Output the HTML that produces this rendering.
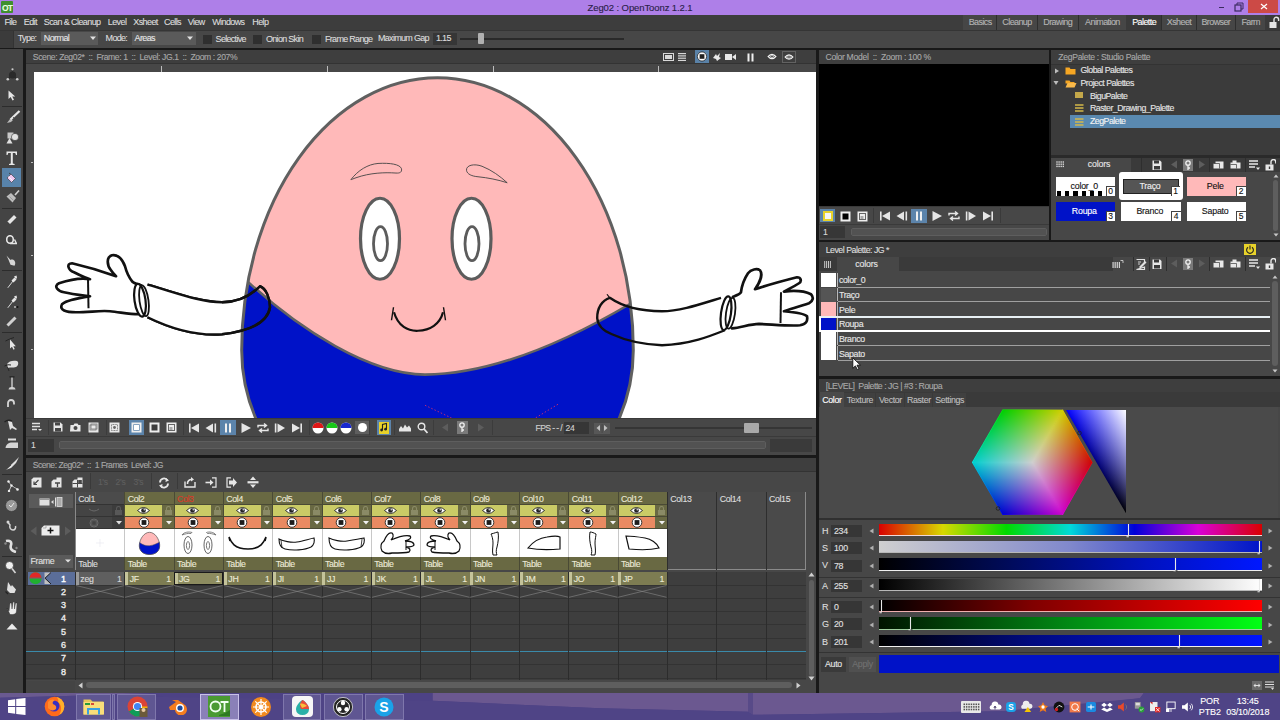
<!DOCTYPE html><html><head><meta charset="utf-8"><style>
html,body{margin:0;padding:0;}
body{width:1280px;height:720px;overflow:hidden;position:relative;background:#191919;font-family:"Liberation Sans", sans-serif;}
div,span{position:absolute;box-sizing:border-box;}
span{white-space:nowrap;-webkit-text-stroke:0.12px;}
</style></head><body>

<div style="left:0px;top:0px;width:1280px;height:15px;background:#ae7fe8;"></div>
<div style="left:1px;top:1px;width:12px;height:12px;background:#3f8f2f;border-radius:1px;"></div>
<span style="left:2.00px;top:3.80px;font-size:8.5px;line-height:8.5px;color:#e8ffe0;letter-spacing:-0.8px;font-weight:bold;">OT</span>
<span style="left:490.00px;top:3.26px;width:300px;text-align:center;font-size:9.5px;line-height:9.5px;color:#2a2048;letter-spacing:-0.1px;">Zeg02 : OpenToonz 1.2.1</span>
<div style="left:1218.75px;top:7.2px;width:5.5px;height:1.3px;background:#3a2a60;"></div>
<svg style="position:absolute;left:1234px;top:2px;" width="10" height="10" viewBox="0 0 10 10"><rect x="1" y="3" width="6" height="6" fill="none" stroke="#3a2a60" stroke-width="1.2"/><path d="M3 3V1h6v6H7" fill="none" stroke="#3a2a60" stroke-width="1"/></svg>
<div style="left:1248px;top:0px;width:30px;height:12.5px;background:#cc4a46;"></div>
<svg style="position:absolute;left:1259.5px;top:3px;" width="8" height="7" viewBox="0 0 8 7"><path d="M1 1L7 6M7 1L1 6" stroke="#fff" stroke-width="1.2"/></svg>
<div style="left:0px;top:15px;width:1280px;height:14.5px;background:#3d3d3d;"></div>
<span style="left:4.40px;top:18.28px;font-size:9px;line-height:9px;color:#dcdcdc;letter-spacing:-0.6px;">File</span>
<span style="left:23.80px;top:18.28px;font-size:9px;line-height:9px;color:#dcdcdc;letter-spacing:-0.6px;">Edit</span>
<span style="left:43.80px;top:18.28px;font-size:9px;line-height:9px;color:#dcdcdc;letter-spacing:-0.6px;">Scan &amp; Cleanup</span>
<span style="left:107.80px;top:18.28px;font-size:9px;line-height:9px;color:#dcdcdc;letter-spacing:-0.6px;">Level</span>
<span style="left:133.30px;top:18.28px;font-size:9px;line-height:9px;color:#dcdcdc;letter-spacing:-0.6px;">Xsheet</span>
<span style="left:164.00px;top:18.28px;font-size:9px;line-height:9px;color:#dcdcdc;letter-spacing:-0.6px;">Cells</span>
<span style="left:187.80px;top:18.28px;font-size:9px;line-height:9px;color:#dcdcdc;letter-spacing:-0.6px;">View</span>
<span style="left:212.20px;top:18.28px;font-size:9px;line-height:9px;color:#dcdcdc;letter-spacing:-0.6px;">Windows</span>
<span style="left:252.30px;top:18.28px;font-size:9px;line-height:9px;color:#dcdcdc;letter-spacing:-0.6px;">Help</span>
<div style="left:963px;top:15px;width:317px;height:14.5px;background:#464646;"></div>
<div style="left:996.4px;top:15px;width:1px;height:14.5px;background:#2e2e2e;"></div>
<span style="left:880.20px;top:18.28px;width:200px;text-align:center;font-size:9px;line-height:9px;color:#b4b4b4;letter-spacing:-0.6px;">Basics</span>
<div style="left:1036.6px;top:15px;width:1px;height:14.5px;background:#2e2e2e;"></div>
<span style="left:917.00px;top:18.28px;width:200px;text-align:center;font-size:9px;line-height:9px;color:#b4b4b4;letter-spacing:-0.6px;">Cleanup</span>
<div style="left:1077.8px;top:15px;width:1px;height:14.5px;background:#2e2e2e;"></div>
<span style="left:957.70px;top:18.28px;width:200px;text-align:center;font-size:9px;line-height:9px;color:#b4b4b4;letter-spacing:-0.6px;">Drawing</span>
<div style="left:1126px;top:15px;width:1px;height:14.5px;background:#2e2e2e;"></div>
<span style="left:1002.40px;top:18.28px;width:200px;text-align:center;font-size:9px;line-height:9px;color:#b4b4b4;letter-spacing:-0.6px;">Animation</span>
<div style="left:1126px;top:15px;width:35.299999999999955px;height:14.5px;background:#3a3a3a;"></div>
<div style="left:1161.3px;top:15px;width:1px;height:14.5px;background:#2e2e2e;"></div>
<span style="left:1044.15px;top:18.28px;width:200px;text-align:center;font-size:9px;line-height:9px;color:#ffffff;letter-spacing:-0.6px;">Palette</span>
<div style="left:1195.7px;top:15px;width:1px;height:14.5px;background:#2e2e2e;"></div>
<span style="left:1079.00px;top:18.28px;width:200px;text-align:center;font-size:9px;line-height:9px;color:#b4b4b4;letter-spacing:-0.6px;">Xsheet</span>
<div style="left:1235px;top:15px;width:1px;height:14.5px;background:#2e2e2e;"></div>
<span style="left:1115.85px;top:18.28px;width:200px;text-align:center;font-size:9px;line-height:9px;color:#b4b4b4;letter-spacing:-0.6px;">Browser</span>
<div style="left:1265.4px;top:15px;width:1px;height:14.5px;background:#2e2e2e;"></div>
<span style="left:1150.70px;top:18.28px;width:200px;text-align:center;font-size:9px;line-height:9px;color:#b4b4b4;letter-spacing:-0.6px;">Farm</span>
<div style="left:1265.4px;top:15px;width:14.6px;height:14.5px;background:#3a3a3a;"></div>
<svg style="position:absolute;left:1268px;top:16px;" width="12" height="13" viewBox="0 0 12 13"><rect x="1.5" y="6" width="7" height="6" fill="#e6e6e6"/><path d="M6 6V3.5a2.3 2.3 0 0 1 4.6 0V5" fill="none" stroke="#e6e6e6" stroke-width="1.4"/></svg>
<div style="left:0px;top:29.5px;width:1280px;height:18px;background:#474747;"></div>
<div style="left:0px;top:29.5px;width:12.5px;height:18px;background:#3b3b3b;"></div>
<div style="left:12.5px;top:29.5px;width:1.2px;height:18px;background:#333;"></div>
<div style="left:0px;top:29.5px;width:1280px;height:1px;background:#353535;"></div>
<span style="left:17.80px;top:34.38px;font-size:9px;line-height:9px;color:#dcdcdc;letter-spacing:-0.7px;">Type:</span>
<div style="left:41px;top:32px;width:57px;height:12.7px;background:#5a5a5a;"></div>
<span style="left:43.80px;top:34.38px;font-size:9px;line-height:9px;color:#e6e6e6;letter-spacing:-0.6px;">Normal</span>
<svg style="position:absolute;left:89px;top:35px;" width="8" height="6" viewBox="0 0 8 6"><path d="M1 1.5h6L4 5z" fill="#e0e0e0"/></svg>
<span style="left:105.60px;top:34.38px;font-size:9px;line-height:9px;color:#dcdcdc;letter-spacing:-0.7px;">Mode:</span>
<div style="left:132px;top:32px;width:63.5px;height:12.7px;background:#5a5a5a;"></div>
<span style="left:134.50px;top:34.38px;font-size:9px;line-height:9px;color:#e6e6e6;letter-spacing:-0.6px;">Areas</span>
<svg style="position:absolute;left:186px;top:35px;" width="8" height="6" viewBox="0 0 8 6"><path d="M1 1.5h6L4 5z" fill="#e0e0e0"/></svg>
<div style="left:203px;top:35px;width:8.5px;height:8.5px;background:#2f2f2f;"></div>
<span style="left:215.60px;top:34.88px;font-size:9px;line-height:9px;color:#dcdcdc;letter-spacing:-0.7px;">Selective</span>
<div style="left:253px;top:35px;width:8.5px;height:8.5px;background:#2f2f2f;"></div>
<span style="left:266.00px;top:34.88px;font-size:9px;line-height:9px;color:#dcdcdc;letter-spacing:-0.7px;">Onion Skin</span>
<div style="left:312px;top:35px;width:8.5px;height:8.5px;background:#2f2f2f;"></div>
<span style="left:325.00px;top:34.88px;font-size:9px;line-height:9px;color:#dcdcdc;letter-spacing:-0.7px;">Frame Range</span>
<span style="left:378.00px;top:34.38px;font-size:9px;line-height:9px;color:#dcdcdc;letter-spacing:-0.7px;">Maximum Gap</span>
<div style="left:433.3px;top:32.6px;width:23.5px;height:12.2px;background:#363636;"></div>
<span style="left:436.00px;top:34.38px;font-size:9px;line-height:9px;color:#dcdcdc;letter-spacing:-0.7px;">1.15</span>
<div style="left:460px;top:37.8px;width:163.5px;height:1.8px;background:#2a2a2a;"></div>
<div style="left:478.4px;top:33.3px;width:5.2px;height:10.7px;background:#b0b0b0;border-radius:1px;"></div>
<div style="left:0px;top:48.5px;width:23.3px;height:642px;background:#414141;"></div>
<div style="left:0px;top:48.5px;width:23.3px;height:644.2px;background:#444444;"></div>
<div style="left:1.5px;top:105.8px;width:20px;height:1px;background:#2c2c2c;"></div>
<div style="left:1.5px;top:207.8px;width:20px;height:1px;background:#2c2c2c;"></div>
<div style="left:1.5px;top:270.0px;width:20px;height:1px;background:#2c2c2c;"></div>
<div style="left:1.5px;top:331.9px;width:20px;height:1px;background:#2c2c2c;"></div>
<div style="left:1.5px;top:473.8px;width:20px;height:1px;background:#2c2c2c;"></div>
<div style="left:1.5px;top:556.1px;width:20px;height:1px;background:#2c2c2c;"></div>
<div style="left:1.9px;top:167.8px;width:19px;height:19px;background:#5883aa;"></div>
<svg style="position:absolute;left:5.8px;top:68.4px;" width="13" height="13" viewBox="0 0 13 13"><circle cx="6.5" cy="7" r="3.6" fill="#2a2a2a"/><path d="M6.5 1v6M6.5 7L2 11M6.5 7L11 11" stroke="#2a2a2a" stroke-width="1.2"/><circle cx="6.5" cy="1.3" r="1.1" fill="#ccc"/><circle cx="1.8" cy="11.2" r="1.3" fill="#ccc"/><circle cx="11.2" cy="11.2" r="1.3" fill="#ccc"/></svg>
<svg style="position:absolute;left:8.3px;top:90.3px;" width="8" height="11" viewBox="0 0 8 11"><path d="M0.5 0.5v8.5l2.2-2 1.8 3.5 1.5-.8-1.8-3.3h3z" fill="#e6e6e6"/></svg>
<svg style="position:absolute;left:5.8px;top:109.7px;" width="15" height="14" viewBox="0 0 15 14"><path d="M1 13l3-4 3 1-2 2z" fill="#bbb"/><path d="M4.5 9.5L13.5 1" stroke="#e6e6e6" stroke-width="2.2"/><path d="M7 7l2 2" stroke="#444" stroke-width="0.8"/></svg>
<svg style="position:absolute;left:5.8px;top:131.8px;" width="13" height="12" viewBox="0 0 13 12"><rect x="1.5" y="0.5" width="6" height="6" fill="#c8c8c8"/><circle cx="9" cy="5" r="3.6" fill="#e0e0e0" stroke="#333" stroke-width="0.6"/><path d="M0.5 11.5L3.5 6l3 5.5z" fill="#e0e0e0"/></svg>
<svg style="position:absolute;left:6.3px;top:150.8px;" width="11.5" height="14" viewBox="0 0 11.5 14"><path d="M0.5 0.5h10.5v3.5h-1l-.8-2H6.8v10.5l1.8.6v.9H3v-.9l1.8-.6V2H2.3l-.8 2h-1z" fill="#e8e8e8"/></svg>
<svg style="position:absolute;left:6.3px;top:171.5px;" width="10" height="11" viewBox="0 0 10 11"><path d="M3 1l2 1.5" stroke="#333" stroke-width="0.8"/><path d="M1 6l4-4 4.5 4.5-4 4z" fill="#f0c8f0" stroke="#333" stroke-width="0.6"/><path d="M2.5 4.5l4.5 4.5" stroke="#fff" stroke-width="0.8"/></svg>
<svg style="position:absolute;left:6.3px;top:189.9px;" width="14" height="13.5" viewBox="0 0 14 13.5"><path d="M9 5L13 0.5" stroke="#d0d0d0" stroke-width="1.6"/><path d="M0.5 6.5L5 3l5 5-3.5 4.5z" fill="#bdbdbd"/><path d="M2 8l4 4M3.5 6.5l4 4" stroke="#777" stroke-width="0.5"/></svg>
<svg style="position:absolute;left:6.8px;top:214.2px;" width="10" height="10.5" viewBox="0 0 10 10.5"><path d="M0.5 7.5L7 1l2.5 2.5L3 10z" fill="#e6e6e6"/><path d="M0.5 7.5L3 10" stroke="#999" stroke-width="0.8"/></svg>
<svg style="position:absolute;left:5.8px;top:234.6px;" width="11.5" height="10" viewBox="0 0 11.5 10"><ellipse cx="4" cy="4.5" rx="3.3" ry="3.8" fill="none" stroke="#e6e6e6" stroke-width="1.6"/><path d="M4 8.5h6.5l-2-4" fill="none" stroke="#e6e6e6" stroke-width="1.4"/></svg>
<svg style="position:absolute;left:6.3px;top:254.7px;" width="10" height="11.5" viewBox="0 0 10 11.5"><path d="M0.5 0.5l4 4.5c1-.8 3-.5 4 .8 1 1.5 1 3.5 0 5l-4-1-2-5z" fill="#d6d6d6"/></svg>
<svg style="position:absolute;left:6.8px;top:275.2px;" width="10" height="13.5" viewBox="0 0 10 13.5"><path d="M0.8 12.8L6 6" stroke="#d6d6d6" stroke-width="1"/><path d="M4.5 5.5l3-3 2 2-3 3z" fill="#e6e6e6"/><path d="M7 1.5l2.5-1 .5 2.5-1 1z" fill="#e6e6e6"/></svg>
<svg style="position:absolute;left:6.8px;top:295px;" width="12" height="14" viewBox="0 0 12 14"><path d="M0.8 12.8L6 6" stroke="#d6d6d6" stroke-width="1"/><path d="M4.5 5.5l3-3 2 2-3 3z" fill="#e6e6e6"/><path d="M7 1.5l2.5-1 .5 2.5-1 1z" fill="#e6e6e6"/><circle cx="8" cy="12" r="1" fill="#bbb"/><circle cx="10.5" cy="12" r="1" fill="#111"/></svg>
<svg style="position:absolute;left:6.3px;top:316.2px;" width="11" height="11" viewBox="0 0 11 11"><path d="M1.5 9.5L9.5 1.5" stroke="#d0d0d0" stroke-width="3"/></svg>
<svg style="position:absolute;left:4.9px;top:336.6px;" width="12.5" height="14" viewBox="0 0 12.5 14"><path d="M0.5 4Q4 2 9 0.5" fill="none" stroke="#222" stroke-width="0.9"/><path d="M5 2.5v9l2-1.8 1.5 3 1.2-.6-1.4-2.8h2.5z" fill="#e6e6e6"/></svg>
<svg style="position:absolute;left:4.4px;top:358.5px;" width="15" height="12.5" viewBox="0 0 15 12.5"><path d="M3 5C5 2 9 1 13 2c2 1 1.5 5-1 6-3 1-6 0-8 1z" fill="#e0e0e0"/><path d="M0.5 7Q4 5 7 6" fill="none" stroke="#222" stroke-width="1"/><path d="M3.5 8l1.5 4" stroke="#222" stroke-width="0.8"/></svg>
<svg style="position:absolute;left:7.8px;top:375.8px;" width="8" height="14.5" viewBox="0 0 8 14.5"><path d="M1.5 0.8h5M4 0.8v11" stroke="#222" stroke-width="1.2"/><path d="M4 1.5v10" stroke="#d8d8d8" stroke-width="1.4"/><path d="M0.5 13.5C1 11 3 11 4 11s3 0 3.5 2.5z" fill="#d0d0d0"/></svg>
<svg style="position:absolute;left:6.3px;top:398.2px;" width="10" height="11" viewBox="0 0 10 11"><path d="M2 9V5a3 3 0 0 1 6 0v1.5" fill="none" stroke="#d6d6d6" stroke-width="1.8"/></svg>
<svg style="position:absolute;left:3.9px;top:417.7px;" width="15.5" height="12.5" viewBox="0 0 15.5 12.5"><path d="M0.5 4Q4 1 8 3" fill="none" stroke="#222" stroke-width="1.2"/><path d="M4 3l4 1 1 4 4 3-1 1-4-2-2 2z" fill="#e0e0e0"/></svg>
<svg style="position:absolute;left:4.9px;top:437.8px;" width="13.5" height="11" viewBox="0 0 13.5 11"><rect x="3" y="0.5" width="8" height="2" fill="#e0e0e0"/><path d="M0.5 10C1 6 4 4.5 7 4.5h6v5.5z" fill="#d6d6d6"/></svg>
<svg style="position:absolute;left:5.4px;top:455.8px;" width="14.5" height="14.5" viewBox="0 0 14.5 14.5"><path d="M0.5 14L9 6l5-5-3 6-5 5z" fill="#e0e0e0"/><path d="M0.5 14L6 9" stroke="#222" stroke-width="0.7"/></svg>
<svg style="position:absolute;left:6.8px;top:479.6px;" width="12" height="12.5" viewBox="0 0 12 12.5"><path d="M1.5 1.5L4.5 5.5L11 9.5M4.5 5.5L2 11" stroke="#d6d6d6" stroke-width="0.9"/><circle cx="1.5" cy="1.5" r="1.2" fill="#eee"/><circle cx="4.5" cy="5.5" r="1.2" fill="#eee"/><circle cx="10.5" cy="9.5" r="1.3" fill="#eee"/><circle cx="2" cy="11" r="1.2" fill="#eee"/></svg>
<svg style="position:absolute;left:5.4px;top:499.2px;" width="13" height="13" viewBox="0 0 13 13"><circle cx="6.5" cy="6.5" r="6" fill="#9a9a9a" stroke="#333" stroke-width="0.6"/><path d="M4 6l2 2 3-4" fill="none" stroke="#e8e8e8" stroke-width="1"/></svg>
<svg style="position:absolute;left:6.3px;top:520.2px;" width="11" height="11" viewBox="0 0 11 11"><circle cx="2" cy="2" r="1.5" fill="#d6d6d6"/><path d="M2 2.5L4 5c-1 3 1 5 3 5s3-2 2.5-4" fill="none" stroke="#d6d6d6" stroke-width="1.5"/></svg>
<svg style="position:absolute;left:4.4px;top:538.6px;" width="14" height="14" viewBox="0 0 14 14"><path d="M2 2C6 1 8 3 7 6s0 6 5 7" fill="none" stroke="#e0e0e0" stroke-width="2.6"/><circle cx="1.5" cy="4.5" r="1.2" fill="#888"/><circle cx="12.5" cy="9" r="1.2" fill="#888"/></svg>
<svg style="position:absolute;left:5.4px;top:560.8px;" width="11.5" height="13" viewBox="0 0 11.5 13"><circle cx="4.5" cy="4.5" r="4" fill="#f0f0f0" stroke="#222" stroke-width="0.6"/><path d="M7 7.5l3.5 4.5" stroke="#d6d6d6" stroke-width="1.6"/></svg>
<svg style="position:absolute;left:5.4px;top:580.8px;" width="13" height="14" viewBox="0 0 13 14"><path d="M3 1l3 4.5 1-1.5 4 4.5-1.5 3.5H5L2 9z" fill="#e0e0e0"/><path d="M0.5 10.5L3 13" stroke="#222" stroke-width="1.3"/></svg>
<svg style="position:absolute;left:5.8px;top:602.2px;" width="11" height="12.5" viewBox="0 0 11 12.5"><path d="M1 6l2 3 1-8 1.5 0 .5 6 1-7 1.5 0v7l1-6h1.5l-.5 8c0 2-1.5 3.5-4 3.5H4z" fill="#ececec" stroke="#222" stroke-width="0.4"/></svg>
<svg style="position:absolute;left:6px;top:622px;" width="12" height="9" viewBox="0 0 12 9"><path d="M0.5 7.5L6 1.5l5.5 6z" fill="#ececec"/></svg>
<div style="left:26px;top:49.5px;width:790px;height:405.5px;background:#474747;"></div>
<div style="left:26px;top:49.5px;width:790px;height:14px;background:#3e3e3e;"></div>
<div style="left:26px;top:63.2px;width:790px;height:0.8px;background:#333333;"></div>
<span style="left:32.80px;top:52.72px;font-size:8.6px;line-height:8.6px;color:#a8a8a8;letter-spacing:-0.4px;">Scene: Zeg02*&nbsp;&nbsp;::&nbsp;&nbsp;Frame: 1&nbsp;&nbsp;::&nbsp;&nbsp;Level: JG.1&nbsp;&nbsp;::&nbsp;&nbsp;Zoom : 207%</span>
<svg style="position:absolute;left:663px;top:53px;" width="11" height="8" viewBox="0 0 11 8"><rect x="0.5" y="0.5" width="10" height="7" fill="none" stroke="#d8d8d8" stroke-width="1"/><rect x="2" y="2" width="7" height="4" fill="#d8d8d8"/></svg>
<svg style="position:absolute;left:678px;top:53px;" width="8" height="8" viewBox="0 0 8 8"><rect x="0" y="0" width="8" height="1.2" fill="#d8d8d8"/><rect x="0" y="2.3" width="8" height="1.2" fill="#d8d8d8"/><rect x="0" y="4.6" width="8" height="1.2" fill="#d8d8d8"/><rect x="0" y="6.9" width="8" height="1.2" fill="#d8d8d8"/></svg>
<div style="left:694.7px;top:50px;width:14px;height:13px;background:#5a82a8;"></div>
<svg style="position:absolute;left:696px;top:51px;" width="12" height="11" viewBox="0 0 12 11"><circle cx="6" cy="5.5" r="4.6" fill="#fff" stroke="#222" stroke-width="0.8"/><rect x="3.6" y="3.2" width="4.8" height="4.6" fill="#222"/></svg>
<svg style="position:absolute;left:712px;top:52px;" width="10" height="10" viewBox="0 0 10 10"><path d="M1 6l3-4 1 2 3-3-1 4 2 1-4 3-1-2z" fill="#e8e8e8"/></svg>
<svg style="position:absolute;left:725px;top:53px;" width="11" height="8" viewBox="0 0 11 8"><rect x="0" y="1" width="7" height="6" fill="#e8e8e8"/><path d="M7 4l4-3v6z" fill="#e8e8e8"/></svg>
<svg style="position:absolute;left:746.5px;top:52.5px;" width="7" height="9" viewBox="0 0 7 9"><rect x="0.5" y="0.5" width="2" height="8" fill="#f0f0f0"/><rect x="4.5" y="0.5" width="2" height="8" fill="#f0f0f0"/></svg>
<svg style="position:absolute;left:766.6px;top:52px;" width="10" height="9" viewBox="0 0 10 9"><path d="M0.3 4.5Q5 -1.2 9.7 4.5Q5 10.2 0.3 4.5z" fill="#f4f4f4"/><path d="M2 4.5Q5 1.3 8 4.5Q5 7.7 2 4.5z" fill="#3a3a3a"/><circle cx="5" cy="4.5" r="1.6" fill="#f4f4f4"/><circle cx="5" cy="4.5" r="0.9" fill="#3a3a3a"/></svg>
<svg style="position:absolute;left:782px;top:50.5px;" width="14" height="12" viewBox="0 0 14 12"><rect x="0.5" y="0.5" width="13" height="11" fill="none" stroke="#999" stroke-width="0.8" stroke-dasharray="1 1"/><g transform="translate(2,1.5)"><path d="M0.3 4.5Q5 -1.2 9.7 4.5Q5 10.2 0.3 4.5z" fill="#f4f4f4"/><path d="M2 4.5Q5 1.3 8 4.5Q5 7.7 2 4.5z" fill="#3a3a3a"/><circle cx="5" cy="4.5" r="1.6" fill="#f4f4f4"/><circle cx="5" cy="4.5" r="0.9" fill="#3a3a3a"/></g></svg>
<div style="left:161px;top:66px;width:0.8px;height:5.5px;background:#bdbdbd;"></div>
<div style="left:327px;top:66px;width:0.8px;height:5.5px;background:#bdbdbd;"></div>
<div style="left:492.8px;top:66px;width:0.8px;height:5.5px;background:#bdbdbd;"></div>
<div style="left:657.7px;top:66px;width:0.8px;height:5.5px;background:#bdbdbd;"></div>
<div style="left:31px;top:162px;width:2px;height:0.8px;background:#bdbdbd;"></div>
<div style="left:31px;top:255px;width:2px;height:0.8px;background:#bdbdbd;"></div>
<div style="left:31px;top:348.5px;width:2px;height:0.8px;background:#bdbdbd;"></div>
<div style="left:34px;top:71.75px;width:781.5px;height:346.5px;background:#ffffff;"></div>
<svg style="position:absolute;left:34px;top:71.75px;" width="781.5" height="346.5" viewBox="0 0 781.5 346.5"><g transform="translate(-34,-71.75)">
<defs><clipPath id="eggclip"><path d="M241.7 350 A195.8 272.5 0 0 1 633.3 350 A195.8 183 0 0 1 241.7 350z"/></clipPath></defs>
<path d="M241.7 350 A195.8 272.5 0 0 1 633.3 350 A195.8 183 0 0 1 241.7 350z" fill="#ffb9b9"/>
<g clip-path="url(#eggclip)"><path d="M230 266 L246.9 280.6 C300 330 370 374 425 374.4 C490 374 560 345 631.2 303 L650 292 L650 560 L230 560z" fill="#0012c8"/>
<path d="M246.9 280.6 C300 330 370 374 425 374.4 C490 374 560 345 631.2 303" fill="none" stroke="#626262" stroke-width="2.6"/></g>
<path d="M241.7 350 A195.8 272.5 0 0 1 633.3 350 A195.8 183 0 0 1 241.7 350z" fill="none" stroke="#606060" stroke-width="3"/>
<path d="M350.9 179.4 C358 170 368 164 378 163.2 C390 162.5 400 164 401.5 168.5 C402 172 400 173 396 172.8 C385 172 370 172.5 356 177.5 C353 178.5 351.5 179.5 350.9 179.4z" fill="none" stroke="#444" stroke-width="0.9"/>
<path d="M507.2 182.5 C500 176 492 170 482 166 C474 163 466 165 466.5 170 C467 174 472 176 478 176.5 C488 177.5 498 179.5 507.2 182.5z" fill="none" stroke="#444" stroke-width="0.9"/>
<ellipse cx="380" cy="238.5" rx="19.5" ry="40.5" fill="#fff" stroke="#5c5c5c" stroke-width="3.2"/>
<ellipse cx="380.5" cy="243.4" rx="7" ry="17" fill="#fff" stroke="#5c5c5c" stroke-width="2.8"/>
<ellipse cx="471.5" cy="238.5" rx="19.5" ry="40.5" fill="#fff" stroke="#5c5c5c" stroke-width="3.2"/>
<ellipse cx="472" cy="243.4" rx="7" ry="17" fill="#fff" stroke="#5c5c5c" stroke-width="2.8"/>
<path d="M394 312 C398 326 408 331 418 330.5 C430 330 440 324 443 312" fill="none" stroke="#111" stroke-width="2.2"/>
<path d="M393.5 307 L391.5 320 M443.5 307 L445.5 320" stroke="#111" stroke-width="1.4"/>

<path d="M147.5 284.4 C175 292 200 302 222 302 C240 302 252 294 260 286 C266 288 270 298 270 307 C268 320 256 330 222 334 C195 336 170 328 147.5 317" fill="none" stroke="#111" stroke-width="2.4" stroke-linejoin="round"/>
<path d="M147.5 284.4 C175 292 200 302 222 302 L222 334 C195 336 170 328 147.5 317z" fill="#fff"/>
<path d="M147.5 284.4 C175 292 200 302 222 302 C240 302 252 294 260 286 C266 288 270 298 270 307 C268 320 256 330 222 334 C195 336 170 328 147.5 317" fill="none" stroke="#111" stroke-width="2.4" stroke-linejoin="round"/>
<path d="M141 285 C137 284 134 283 132.5 281.6 C128 276 126 270 125 266 C122 258 117 254 112 255 C106 257 107 265 111 270 C113 273 115 275 116 276 C105 272 85 266 72 263 C66 263 68 270 74 272 C80 275 86 278 90 279 C80 277 65 281 59 283 C53 286 58 291 64 292 C72 294 82 295 90 296 C78 298 66 300 62 304 C59 310 66 312 76 312 C90 312 100 310 110 311 C120 312 130 314 138 314" fill="#fff" stroke="#111" stroke-width="2.7" stroke-linejoin="round" stroke-linecap="round"/>
<path d="M88 278 L88.5 308" stroke="#111" stroke-width="2"/>
<ellipse cx="140" cy="300" rx="5.5" ry="16.5" fill="#fff" stroke="#111" stroke-width="2.2" transform="rotate(-8 140 300)"/>
<ellipse cx="144" cy="300.5" rx="4.5" ry="15.5" fill="none" stroke="#111" stroke-width="1.8" transform="rotate(-8 144 300.5)"/>

<path d="M721 297.6 C700 304 680 311 661.9 311 L662 345 C690 344 710 336 724.8 330z" fill="#fff"/>
<path d="M721 297.6 C700 304 680 311 661.9 311 C640 311 622 306 609.8 297.6 C602 300 597 308 597.2 318 C598 326 604 331 612 334 C625 340 640 344 662 345 C690 344 710 336 724.8 330" fill="none" stroke="#111" stroke-width="2.4" stroke-linejoin="round"/>
<path d="M609.8 297.6 L607 294" stroke="#111" stroke-width="1.2"/>
<path d="M733 296.5 C737 295 740 294 740.9 292.2 C742 284 744 279 748 273 C751 269 757 268 760 270 C763 274 760 282 755 289 C770 284 785 280 797 277 C801 277 802 281 799 283 C793 287 788 289 784 291.3 C795 290 805 291 811 294 C814 297 813 301 809 303 C800 306 790 309 784 311 C795 312 804 313 807 316 C808 321 806 324 800 325 C790 326 770 324 759 323.7 C750 324 742 327 732 328.2" fill="#fff" stroke="#111" stroke-width="2.7" stroke-linejoin="round" stroke-linecap="round"/>
<path d="M781 292 L780.5 322.8" stroke="#111" stroke-width="2"/>
<ellipse cx="726" cy="313" rx="5" ry="17" fill="#fff" stroke="#111" stroke-width="2.2" transform="rotate(8 726 313)"/>
<ellipse cx="730.5" cy="313" rx="4.5" ry="15.5" fill="none" stroke="#111" stroke-width="1.8" transform="rotate(8 730.5 313)"/>
<path d="M425 405 L452 418 M558 404 L535 418" stroke="#e0306a" stroke-width="0.8" stroke-dasharray="1.5 2"/></g></svg>
<div style="left:26px;top:418.25px;width:790px;height:18px;background:#474747;"></div>
<div style="left:26px;top:418.25px;width:790px;height:0.8px;background:#3a3a3a;"></div>
<div style="left:47.5px;top:420px;width:1px;height:15px;background:#3c3c3c;"></div>
<div style="left:88px;top:420px;width:1px;height:15px;background:#3c3c3c;"></div>
<div style="left:106px;top:420px;width:1px;height:15px;background:#3c3c3c;"></div>
<div style="left:183px;top:420px;width:1px;height:15px;background:#3c3c3c;"></div>
<div style="left:308.7px;top:420px;width:1px;height:15px;background:#3c3c3c;"></div>
<div style="left:368.7px;top:420px;width:1px;height:15px;background:#3c3c3c;"></div>
<div style="left:394px;top:420px;width:1px;height:15px;background:#3c3c3c;"></div>
<div style="left:432.8px;top:420px;width:1px;height:15px;background:#3c3c3c;"></div>
<div style="left:492px;top:420px;width:1px;height:15px;background:#3c3c3c;"></div>
<svg style="position:absolute;left:32px;top:422px;" width="10" height="10" viewBox="0 0 10 10"><path d="M0 1.5h8M0 4.5h8M0 7.5h5" stroke="#e0e0e0" stroke-width="1.3"/><path d="M6 7l2 2 2-2z" fill="#e0e0e0"/></svg>
<svg style="position:absolute;left:53px;top:422px;" width="10" height="10" viewBox="0 0 10 10"><path d="M0.5 0.5h7l2 2v7h-9z" fill="#e8e8e8"/><rect x="2" y="0.5" width="5" height="3" fill="#474747"/><rect x="2" y="6" width="6" height="3.5" fill="#474747"/></svg>
<svg style="position:absolute;left:70px;top:422.5px;" width="11" height="9" viewBox="0 0 11 9"><path d="M0.5 2h3l1-1.5h3l1 1.5h2v6.5h-10.5z" fill="#e8e8e8"/><circle cx="5.5" cy="5" r="2" fill="#474747"/></svg>
<svg style="position:absolute;left:87.5px;top:421.5px;" width="11" height="11" viewBox="0 0 11 11"><rect x="0.5" y="0.5" width="10" height="10" fill="#e8e8e8"/><rect x="2" y="3" width="6" height="5" fill="none" stroke="#777" stroke-width="0.8"/><rect x="3" y="2" width="6" height="5" fill="none" stroke="#777" stroke-width="0.8"/></svg>
<svg style="position:absolute;left:109px;top:421.5px;" width="11" height="11" viewBox="0 0 11 11"><rect x="0.5" y="0.5" width="10" height="10" fill="#e8e8e8"/><rect x="2.5" y="2.5" width="6" height="6" fill="none" stroke="#666" stroke-width="0.8" stroke-dasharray="1 0.6"/><circle cx="5.5" cy="5.5" r="1.4" fill="#666"/></svg>
<div style="left:128.7px;top:419.8px;width:15.7px;height:15.5px;background:#5c84ab;"></div>
<svg style="position:absolute;left:131px;top:422px;" width="11" height="11" viewBox="0 0 11 11"><rect x="0.5" y="0.5" width="10" height="10" fill="#eee"/><rect x="2.3" y="2.3" width="6.4" height="6.4" fill="#5c84ab"/><rect x="3" y="3" width="5" height="5" fill="#fff"/></svg>
<svg style="position:absolute;left:148.5px;top:422px;" width="11" height="11" viewBox="0 0 11 11"><rect x="0.5" y="0.5" width="10" height="10" fill="#eee"/><rect x="2.5" y="2.5" width="6" height="6" fill="#3c3c3c"/></svg>
<svg style="position:absolute;left:165.5px;top:422px;" width="11" height="11" viewBox="0 0 11 11"><rect x="0.5" y="0.5" width="10" height="10" fill="#eee"/><rect x="2.5" y="2.5" width="6" height="6" fill="none" stroke="#666" stroke-width="1"/><rect x="3.5" y="5" width="3" height="3" fill="#aaa"/></svg>
<svg style="position:absolute;left:188px;top:422.5px;" width="12" height="10" viewBox="0 0 12 10"><rect x="1" y="0.5" width="1.6" height="9" fill="#e6e6e6"/><path d="M11 0.5v9L3 5z" fill="#e6e6e6"/></svg>
<svg style="position:absolute;left:205px;top:422.5px;" width="12" height="10" viewBox="0 0 12 10"><path d="M8 0.5v9L0.5 5z" fill="#e6e6e6"/><rect x="9.5" y="0.5" width="1.6" height="9" fill="#e6e6e6"/></svg>
<div style="left:220px;top:419.8px;width:16px;height:15.5px;background:#5c84ab;"></div>
<svg style="position:absolute;left:222px;top:422.5px;" width="12" height="10" viewBox="0 0 12 10"><rect x="3" y="0.5" width="2" height="9" fill="#f0f0f0"/><rect x="7" y="0.5" width="2" height="9" fill="#f0f0f0"/></svg>
<svg style="position:absolute;left:239.5px;top:422.5px;" width="12" height="10" viewBox="0 0 12 10"><path d="M1.5 0v10l9.5-5z" fill="#e6e6e6"/></svg>
<svg style="position:absolute;left:256.5px;top:422.5px;" width="12" height="10" viewBox="0 0 12 10"><path d="M1 4.5V2.5h8M7 0.5l2.5 2-2.5 2M11 5.5v2H3M5 9.5l-2.5-2 2.5-2" fill="none" stroke="#e6e6e6" stroke-width="1.4"/></svg>
<svg style="position:absolute;left:274px;top:422.5px;" width="12" height="10" viewBox="0 0 12 10"><rect x="0.8" y="0.5" width="1.6" height="9" fill="#e6e6e6"/><path d="M3.5 0.5v9L11 5z" fill="#e6e6e6"/></svg>
<svg style="position:absolute;left:291px;top:422.5px;" width="12" height="10" viewBox="0 0 12 10"><path d="M1 0.5v9L9 5z" fill="#e6e6e6"/><rect x="9.4" y="0.5" width="1.6" height="9" fill="#e6e6e6"/></svg>
<svg style="position:absolute;left:311.5px;top:421.5px;" width="12" height="12" viewBox="0 0 12 12"><circle cx="6" cy="6" r="5.5" fill="#fff"/><path d="M0.5 6A5.5 5.5 0 0 1 11.5 6z" fill="#e01818"/></svg>
<svg style="position:absolute;left:325.5px;top:421.5px;" width="12" height="12" viewBox="0 0 12 12"><circle cx="6" cy="6" r="5.5" fill="#fff"/><path d="M0.5 6A5.5 5.5 0 0 1 11.5 6z" fill="#18c818"/></svg>
<svg style="position:absolute;left:339.5px;top:421.5px;" width="12" height="12" viewBox="0 0 12 12"><circle cx="6" cy="6" r="5.5" fill="#fff"/><path d="M0.5 6A5.5 5.5 0 0 1 11.5 6z" fill="#1828d0"/></svg>
<div style="left:355px;top:420.5px;width:13.5px;height:13.5px;background:#5e5e5e;"></div>
<svg style="position:absolute;left:356.5px;top:421.5px;" width="11" height="11" viewBox="0 0 11 11"><circle cx="5.5" cy="5.5" r="4.5" fill="#fff"/></svg>
<div style="left:376.5px;top:419.8px;width:14.5px;height:15.5px;background:#5c84ab;"></div>
<div style="left:378.5px;top:421.5px;width:10.5px;height:12px;background:#e8d22a;"></div>
<svg style="position:absolute;left:379px;top:422px;" width="10" height="11" viewBox="0 0 10 11"><path d="M3.5 8V2.5l4-1V7" fill="none" stroke="#222" stroke-width="1.1"/><circle cx="2.6" cy="8" r="1.4" fill="#222"/><circle cx="6.6" cy="7.2" r="1.4" fill="#222"/></svg>
<svg style="position:absolute;left:399px;top:423px;" width="12" height="9" viewBox="0 0 12 9"><path d="M0 8.5V6l2-3 2 2.5 2-4 2 3 2-2 2 3v3z" fill="#e6e6e6"/></svg>
<svg style="position:absolute;left:417px;top:421.5px;" width="11" height="12" viewBox="0 0 11 12"><circle cx="4.5" cy="4.5" r="3.3" fill="none" stroke="#e6e6e6" stroke-width="1.4"/><path d="M7 7l3.5 4" stroke="#e6e6e6" stroke-width="1.8"/></svg>
<svg style="position:absolute;left:440.5px;top:423px;" width="8" height="9" viewBox="0 0 8 9"><path d="M7 0.5v8L1 4.5z" fill="#5d5d5d"/></svg>
<div style="left:456.5px;top:420.8px;width:11px;height:13.5px;background:#7a7a7a;"></div>
<svg style="position:absolute;left:458px;top:422px;" width="8" height="11" viewBox="0 0 8 11"><circle cx="4" cy="3" r="2.2" fill="none" stroke="#f0f0f0" stroke-width="1.3"/><path d="M4 5v5M4 8h2" stroke="#f0f0f0" stroke-width="1.3"/></svg>
<svg style="position:absolute;left:477px;top:423px;" width="8" height="9" viewBox="0 0 8 9"><path d="M1 0.5v8L7 4.5z" fill="#5d5d5d"/></svg>
<span style="left:535.50px;top:423.72px;font-size:8.6px;line-height:8.6px;color:#d0d0d0;letter-spacing:-0.6px;">FPS - - /</span>
<div style="left:564px;top:421.8px;width:25px;height:12px;background:#363636;"></div>
<span style="left:565.50px;top:423.72px;font-size:8.6px;line-height:8.6px;color:#d0d0d0;letter-spacing:-0.3px;">24</span>
<div style="left:593.5px;top:422.5px;width:16px;height:11px;background:#575757;"></div>
<svg style="position:absolute;left:594px;top:423.5px;" width="16" height="9" viewBox="0 0 16 9"><path d="M6 1v6L2.5 4z" fill="#c0c0c0"/><path d="M10 1v6l3.5-3z" fill="#c0c0c0"/><rect x="7.7" y="0" width="0.8" height="9" fill="#474747"/></svg>
<div style="left:615px;top:426.5px;width:197px;height:2px;background:#353535;"></div>
<div style="left:744px;top:422.5px;width:15px;height:10px;background:#a9a9a9;border-radius:1px;"></div>
<div style="left:26px;top:436.3px;width:790px;height:18.7px;background:#474747;"></div>
<div style="left:26px;top:436.3px;width:790px;height:0.8px;background:#3a3a3a;"></div>
<div style="left:28px;top:438.5px;width:26px;height:13.5px;background:#373737;"></div>
<span style="left:31.00px;top:441.22px;font-size:8.6px;line-height:8.6px;color:#d8d8d8;letter-spacing:-0.4px;">1</span>
<div style="left:58.5px;top:441px;width:707px;height:8.2px;background:#3a3a3a;border:1px solid #5e5e5e;border-radius:2px;"></div>
<div style="left:59.5px;top:442px;width:705px;height:6.2px;background:#525252;"></div>
<div style="left:770px;top:438.5px;width:42px;height:13.5px;background:#3a3a3a;"></div>
<div style="left:26px;top:458px;width:790px;height:234.7px;background:#474747;"></div>
<div style="left:26px;top:458px;width:790px;height:13.3px;background:#3e3e3e;"></div>
<div style="left:26px;top:471px;width:790px;height:0.8px;background:#333;"></div>
<span style="left:32.70px;top:461.32px;font-size:8.6px;line-height:8.6px;color:#a8a8a8;letter-spacing:-0.48px;">Scene: Zeg02*&nbsp;&nbsp;::&nbsp;&nbsp;1 Frames&nbsp;&nbsp;Level: JG</span>
<svg style="position:absolute;left:31px;top:477px;" width="11" height="11" viewBox="0 0 11 11"><path d="M0.5 2.5l2-2h8v10h-10z" fill="#e6e6e6"/><path d="M7.5 3l-4.5 4.5M3 4.5v3h3" fill="none" stroke="#474747" stroke-width="1.2"/></svg>
<svg style="position:absolute;left:51px;top:477px;" width="11" height="11" viewBox="0 0 11 11"><path d="M0.5 4.5l2-2h3v-2h5v10h-10z" fill="#e6e6e6"/><path d="M4 6h5M6.5 6v4" stroke="#474747" stroke-width="1.3"/></svg>
<svg style="position:absolute;left:72px;top:477px;" width="11" height="11" viewBox="0 0 11 11"><path d="M0.5 4.5l2-2h3v-2h5v10h-10z" fill="#e6e6e6"/><path d="M5.5 3v7.5M0.5 6.5h10" stroke="#474747" stroke-width="1"/><rect x="6.2" y="3" width="3.6" height="3" fill="#474747"/></svg>
<div style="left:89.5px;top:473px;width:1px;height:16px;background:#3a3a3a;"></div>
<span style="left:87.80px;top:478.02px;width:30px;text-align:center;font-size:8.6px;line-height:8.6px;color:#5f5f5f;letter-spacing:-0.3px;">1's</span>
<span style="left:105.50px;top:478.02px;width:30px;text-align:center;font-size:8.6px;line-height:8.6px;color:#5f5f5f;letter-spacing:-0.3px;">2's</span>
<span style="left:123.40px;top:478.02px;width:30px;text-align:center;font-size:8.6px;line-height:8.6px;color:#5f5f5f;letter-spacing:-0.3px;">3's</span>
<div style="left:151px;top:473px;width:1px;height:16px;background:#3a3a3a;"></div>
<svg style="position:absolute;left:158px;top:476.5px;" width="12" height="12" viewBox="0 0 12 12"><path d="M2 5.5A4 4 0 0 1 9.5 3.5" fill="none" stroke="#e6e6e6" stroke-width="1.8"/><path d="M8 1l3 2.5-3.5 1.5z" fill="#e6e6e6"/><path d="M10 6.5A4 4 0 0 1 2.5 8.5" fill="none" stroke="#e6e6e6" stroke-width="1.8"/><path d="M4 11l-3-2.5 3.5-1.5z" fill="#e6e6e6"/></svg>
<div style="left:177px;top:473px;width:1px;height:16px;background:#3a3a3a;"></div>
<svg style="position:absolute;left:184px;top:476px;" width="12" height="12" viewBox="0 0 12 12"><path d="M1 5.5v5.5h10V6" fill="none" stroke="#e6e6e6" stroke-width="1.4"/><path d="M3.5 8A4 4 0 0 1 8 3.5" fill="none" stroke="#e6e6e6" stroke-width="1.6"/><path d="M7 1l3 2.5-3 2z" fill="#e6e6e6"/></svg>
<svg style="position:absolute;left:205px;top:477px;" width="12" height="11" viewBox="0 0 12 11"><path d="M0.5 5.5h5" stroke="#e6e6e6" stroke-width="1.6"/><path d="M5 2.5l3.5 3-3.5 3z" fill="#e6e6e6"/><path d="M7 0.8h4v9.4H7" fill="none" stroke="#e6e6e6" stroke-width="1.2"/></svg>
<svg style="position:absolute;left:226px;top:477px;" width="12" height="11" viewBox="0 0 12 11"><path d="M5 0.8H1v9.4h4" fill="none" stroke="#e6e6e6" stroke-width="1.2"/><path d="M3 3.5h4v-2.5l4 4.5-4 4.5v-2.5H3z" fill="#e6e6e6"/></svg>
<svg style="position:absolute;left:246.5px;top:476px;" width="12" height="13" viewBox="0 0 12 13"><path d="M3 4l3-3.5 3 3.5z" fill="#e6e6e6"/><rect x="0.5" y="5.2" width="11" height="2.2" fill="#e6e6e6"/><path d="M3 8.5l3 3.5 3-3.5z" fill="#e6e6e6"/></svg>
<div style="left:28.5px;top:494px;width:44.5px;height:14px;background:#5a5a5a;"></div>
<svg style="position:absolute;left:39px;top:496.5px;" width="25" height="10" viewBox="0 0 25 10"><rect x="0.5" y="1.5" width="10" height="7" fill="#e0e0e0"/><rect x="0.5" y="1.5" width="10" height="1.5" fill="#999"/><path d="M14.5 3l-2.5 2 2.5 2z" fill="#e0e0e0"/><rect x="16" y="0.5" width="1" height="9" fill="#e0e0e0"/><rect x="18" y="0.5" width="5" height="9" fill="#aaa" stroke="#e0e0e0" stroke-width="0.8"/></svg>
<svg style="position:absolute;left:29.5px;top:526px;" width="8" height="10" viewBox="0 0 8 10"><path d="M6.5 0.5v9L0.5 5z" fill="#5c5c5c"/></svg>
<svg style="position:absolute;left:64px;top:526px;" width="8" height="10" viewBox="0 0 8 10"><path d="M1 0.5v9L7 5z" fill="#5c5c5c"/></svg>
<svg style="position:absolute;left:40.5px;top:525px;" width="19" height="11" viewBox="0 0 19 11"><path d="M0.5 3l2.5-2.5h15.5v10h-18z" fill="#ececec"/><path d="M2 3h3v-2" fill="none" stroke="#888" stroke-width="0.6"/><path d="M9.5 2.5v6M6.5 5.5h6" stroke="#111" stroke-width="1.5"/></svg>
<div style="left:28.5px;top:555px;width:44.5px;height:12.5px;background:#5a5a5a;"></div>
<span style="left:30.50px;top:557.05px;font-size:8.8px;line-height:8.8px;color:#e0e0e0;letter-spacing:-0.3px;">Frame</span>
<svg style="position:absolute;left:64px;top:558px;" width="8" height="6" viewBox="0 0 8 6"><path d="M1 1.5h6L4 4.5z" fill="#e0e0e0"/></svg>
<div style="left:75px;top:491.5px;width:731px;height:78.5px;background:#8a8a8a;"></div>
<div style="left:76px;top:492.3px;width:729px;height:76.9px;background:#4a4a4a;"></div>
<div style="left:75.8px;top:492.3px;width:48.533px;height:12px;background:#4b4b4b;"></div>
<div style="left:75.8px;top:504.3px;width:48.533px;height:24px;background:#444444;"></div>
<div style="left:112.3px;top:504.3px;width:12px;height:24px;background:#3c3c3c;"></div>
<div style="left:75.8px;top:504px;width:48.533px;height:0.8px;background:#333;"></div>
<div style="left:75.8px;top:516.3px;width:48.533px;height:0.8px;background:#333;"></div>
<div style="left:75.8px;top:528px;width:48.533px;height:0.8px;background:#333;"></div>
<svg style="position:absolute;left:82.8px;top:507px;" width="22" height="8" viewBox="0 0 22 8"><path d="M6 2Q11 6 16 2" fill="none" stroke="#6a6a6a" stroke-width="1"/></svg>
<svg style="position:absolute;left:87.8px;top:517.5px;" width="12" height="10" viewBox="0 0 12 10"><circle cx="6" cy="5" r="4" fill="none" stroke="#6a6a6a" stroke-width="1"/><rect x="3.8" y="2.8" width="4.4" height="4.4" fill="none" stroke="#6a6a6a" stroke-width="0.7"/></svg>
<svg style="position:absolute;left:114.3px;top:506px;" width="9" height="10" viewBox="0 0 9 10"><rect x="1" y="4" width="7" height="5" fill="#585858"/><path d="M2.5 4V2.5a2 2 0 0 1 4 0V4" fill="none" stroke="#585858" stroke-width="1.1"/></svg>
<svg style="position:absolute;left:115.3px;top:519.5px;" width="8" height="6" viewBox="0 0 8 6"><path d="M1 1h6L4 4.5z" fill="#e0e0e0"/></svg>
<div style="left:75.8px;top:528.8px;width:48.533px;height:28.5px;background:#ffffff;"></div>
<div style="left:75.8px;top:557.3px;width:48.533px;height:12.3px;background:#4b4b4b;"></div>
<span style="left:78.30px;top:495.15px;font-size:8.8px;line-height:8.8px;color:#dedede;letter-spacing:-0.35px;">Col1</span>
<span style="left:78.30px;top:559.75px;font-size:8.8px;line-height:8.8px;color:#dedede;letter-spacing:-0.35px;">Table</span>
<div style="left:125.133px;top:492.3px;width:48.533px;height:12px;background:#696943;"></div>
<div style="left:125.133px;top:504.3px;width:37px;height:12px;background:#cacb66;"></div>
<div style="left:162.13299999999998px;top:504.3px;width:11.533000000000001px;height:12px;background:#696943;"></div>
<div style="left:125.133px;top:516.3px;width:37px;height:12px;background:#e98a62;"></div>
<div style="left:162.13299999999998px;top:516.3px;width:11.533000000000001px;height:12px;background:#696943;"></div>
<div style="left:125.133px;top:504px;width:48.533px;height:0.8px;background:#4a4a35;"></div>
<div style="left:125.133px;top:516px;width:48.533px;height:0.8px;background:#4a4a35;"></div>
<div style="left:125.133px;top:528px;width:48.533px;height:0.8px;background:#4a4a35;"></div>
<svg style="position:absolute;left:137.13299999999998px;top:506px;" width="13" height="9" viewBox="0 0 13 9"><path d="M0.5 4.5Q6.5 -1.5 12.5 4.5Q6.5 10.5 0.5 4.5z" fill="#fff" stroke="#222" stroke-width="0.9"/><circle cx="6.5" cy="4.5" r="2.3" fill="#222"/><circle cx="7.2" cy="3.8" r="0.7" fill="#fff"/></svg>
<svg style="position:absolute;left:137.63299999999998px;top:517px;" width="12" height="11" viewBox="0 0 12 11"><circle cx="6" cy="5.5" r="4.8" fill="#fff" stroke="#222" stroke-width="0.9"/><rect x="3.6" y="3.1" width="4.8" height="4.8" fill="#1c1c1c"/></svg>
<svg style="position:absolute;left:163.63299999999998px;top:506px;" width="9" height="10" viewBox="0 0 9 10"><rect x="1" y="4" width="7" height="5" fill="#8a8a66"/><path d="M2.5 4V2.5a2 2 0 0 1 4 0V4" fill="none" stroke="#8a8a66" stroke-width="1.1"/></svg>
<svg style="position:absolute;left:164.63299999999998px;top:519.5px;" width="8" height="6" viewBox="0 0 8 6"><path d="M1 1h6L4 4.5z" fill="#f0f0f0"/></svg>
<div style="left:125.133px;top:528.8px;width:48.533px;height:28.5px;background:#ffffff;"></div>
<div style="left:125.133px;top:557.3px;width:48.533px;height:12.3px;background:#696943;"></div>
<span style="left:127.63px;top:495.15px;font-size:8.8px;line-height:8.8px;color:#ecead8;letter-spacing:-0.35px;">Col2</span>
<span style="left:127.63px;top:559.75px;font-size:8.8px;line-height:8.8px;color:#ecead8;letter-spacing:-0.35px;">Table</span>
<div style="left:124.333px;top:528.8px;width:0.8px;height:28.5px;background:#c8c8c8;"></div>
<div style="left:124.333px;top:492.3px;width:0.8px;height:36.5px;background:#4a4a35;"></div>
<div style="left:124.333px;top:557.3px;width:0.8px;height:12.3px;background:#4a4a35;"></div>
<div style="left:174.466px;top:492.3px;width:48.533px;height:12px;background:#696943;"></div>
<div style="left:174.466px;top:504.3px;width:37px;height:12px;background:#cacb66;"></div>
<div style="left:211.466px;top:504.3px;width:11.533000000000001px;height:12px;background:#696943;"></div>
<div style="left:174.466px;top:516.3px;width:37px;height:12px;background:#e98a62;"></div>
<div style="left:211.466px;top:516.3px;width:11.533000000000001px;height:12px;background:#696943;"></div>
<div style="left:174.466px;top:504px;width:48.533px;height:0.8px;background:#4a4a35;"></div>
<div style="left:174.466px;top:516px;width:48.533px;height:0.8px;background:#4a4a35;"></div>
<div style="left:174.466px;top:528px;width:48.533px;height:0.8px;background:#4a4a35;"></div>
<svg style="position:absolute;left:186.466px;top:506px;" width="13" height="9" viewBox="0 0 13 9"><path d="M0.5 4.5Q6.5 -1.5 12.5 4.5Q6.5 10.5 0.5 4.5z" fill="#fff" stroke="#222" stroke-width="0.9"/><circle cx="6.5" cy="4.5" r="2.3" fill="#222"/><circle cx="7.2" cy="3.8" r="0.7" fill="#fff"/></svg>
<svg style="position:absolute;left:186.966px;top:517px;" width="12" height="11" viewBox="0 0 12 11"><circle cx="6" cy="5.5" r="4.8" fill="#fff" stroke="#222" stroke-width="0.9"/><rect x="3.6" y="3.1" width="4.8" height="4.8" fill="#1c1c1c"/></svg>
<svg style="position:absolute;left:212.966px;top:506px;" width="9" height="10" viewBox="0 0 9 10"><rect x="1" y="4" width="7" height="5" fill="#8a8a66"/><path d="M2.5 4V2.5a2 2 0 0 1 4 0V4" fill="none" stroke="#8a8a66" stroke-width="1.1"/></svg>
<svg style="position:absolute;left:213.966px;top:519.5px;" width="8" height="6" viewBox="0 0 8 6"><path d="M1 1h6L4 4.5z" fill="#f0f0f0"/></svg>
<div style="left:174.466px;top:528.8px;width:48.533px;height:28.5px;background:#ffffff;"></div>
<div style="left:174.466px;top:557.3px;width:48.533px;height:12.3px;background:#696943;"></div>
<span style="left:176.97px;top:495.15px;font-size:8.8px;line-height:8.8px;color:#d83a2a;letter-spacing:-0.35px;">Col3</span>
<span style="left:176.97px;top:559.75px;font-size:8.8px;line-height:8.8px;color:#ecead8;letter-spacing:-0.35px;">Table</span>
<div style="left:173.666px;top:528.8px;width:0.8px;height:28.5px;background:#c8c8c8;"></div>
<div style="left:173.666px;top:492.3px;width:0.8px;height:36.5px;background:#4a4a35;"></div>
<div style="left:173.666px;top:557.3px;width:0.8px;height:12.3px;background:#4a4a35;"></div>
<div style="left:223.799px;top:492.3px;width:48.533px;height:12px;background:#696943;"></div>
<div style="left:223.799px;top:504.3px;width:37px;height:12px;background:#cacb66;"></div>
<div style="left:260.799px;top:504.3px;width:11.533000000000001px;height:12px;background:#696943;"></div>
<div style="left:223.799px;top:516.3px;width:37px;height:12px;background:#e98a62;"></div>
<div style="left:260.799px;top:516.3px;width:11.533000000000001px;height:12px;background:#696943;"></div>
<div style="left:223.799px;top:504px;width:48.533px;height:0.8px;background:#4a4a35;"></div>
<div style="left:223.799px;top:516px;width:48.533px;height:0.8px;background:#4a4a35;"></div>
<div style="left:223.799px;top:528px;width:48.533px;height:0.8px;background:#4a4a35;"></div>
<svg style="position:absolute;left:235.799px;top:506px;" width="13" height="9" viewBox="0 0 13 9"><path d="M0.5 4.5Q6.5 -1.5 12.5 4.5Q6.5 10.5 0.5 4.5z" fill="#fff" stroke="#222" stroke-width="0.9"/><circle cx="6.5" cy="4.5" r="2.3" fill="#222"/><circle cx="7.2" cy="3.8" r="0.7" fill="#fff"/></svg>
<svg style="position:absolute;left:236.299px;top:517px;" width="12" height="11" viewBox="0 0 12 11"><circle cx="6" cy="5.5" r="4.8" fill="#fff" stroke="#222" stroke-width="0.9"/><rect x="3.6" y="3.1" width="4.8" height="4.8" fill="#1c1c1c"/></svg>
<svg style="position:absolute;left:262.299px;top:506px;" width="9" height="10" viewBox="0 0 9 10"><rect x="1" y="4" width="7" height="5" fill="#8a8a66"/><path d="M2.5 4V2.5a2 2 0 0 1 4 0V4" fill="none" stroke="#8a8a66" stroke-width="1.1"/></svg>
<svg style="position:absolute;left:263.299px;top:519.5px;" width="8" height="6" viewBox="0 0 8 6"><path d="M1 1h6L4 4.5z" fill="#f0f0f0"/></svg>
<div style="left:223.799px;top:528.8px;width:48.533px;height:28.5px;background:#ffffff;"></div>
<div style="left:223.799px;top:557.3px;width:48.533px;height:12.3px;background:#696943;"></div>
<span style="left:226.30px;top:495.15px;font-size:8.8px;line-height:8.8px;color:#ecead8;letter-spacing:-0.35px;">Col4</span>
<span style="left:226.30px;top:559.75px;font-size:8.8px;line-height:8.8px;color:#ecead8;letter-spacing:-0.35px;">Table</span>
<div style="left:222.999px;top:528.8px;width:0.8px;height:28.5px;background:#c8c8c8;"></div>
<div style="left:222.999px;top:492.3px;width:0.8px;height:36.5px;background:#4a4a35;"></div>
<div style="left:222.999px;top:557.3px;width:0.8px;height:12.3px;background:#4a4a35;"></div>
<div style="left:273.132px;top:492.3px;width:48.533px;height:12px;background:#696943;"></div>
<div style="left:273.132px;top:504.3px;width:37px;height:12px;background:#cacb66;"></div>
<div style="left:310.132px;top:504.3px;width:11.533000000000001px;height:12px;background:#696943;"></div>
<div style="left:273.132px;top:516.3px;width:37px;height:12px;background:#e98a62;"></div>
<div style="left:310.132px;top:516.3px;width:11.533000000000001px;height:12px;background:#696943;"></div>
<div style="left:273.132px;top:504px;width:48.533px;height:0.8px;background:#4a4a35;"></div>
<div style="left:273.132px;top:516px;width:48.533px;height:0.8px;background:#4a4a35;"></div>
<div style="left:273.132px;top:528px;width:48.533px;height:0.8px;background:#4a4a35;"></div>
<svg style="position:absolute;left:285.132px;top:506px;" width="13" height="9" viewBox="0 0 13 9"><path d="M0.5 4.5Q6.5 -1.5 12.5 4.5Q6.5 10.5 0.5 4.5z" fill="#fff" stroke="#222" stroke-width="0.9"/><circle cx="6.5" cy="4.5" r="2.3" fill="#222"/><circle cx="7.2" cy="3.8" r="0.7" fill="#fff"/></svg>
<svg style="position:absolute;left:285.632px;top:517px;" width="12" height="11" viewBox="0 0 12 11"><circle cx="6" cy="5.5" r="4.8" fill="#fff" stroke="#222" stroke-width="0.9"/><rect x="3.6" y="3.1" width="4.8" height="4.8" fill="#1c1c1c"/></svg>
<svg style="position:absolute;left:311.632px;top:506px;" width="9" height="10" viewBox="0 0 9 10"><rect x="1" y="4" width="7" height="5" fill="#8a8a66"/><path d="M2.5 4V2.5a2 2 0 0 1 4 0V4" fill="none" stroke="#8a8a66" stroke-width="1.1"/></svg>
<svg style="position:absolute;left:312.632px;top:519.5px;" width="8" height="6" viewBox="0 0 8 6"><path d="M1 1h6L4 4.5z" fill="#f0f0f0"/></svg>
<div style="left:273.132px;top:528.8px;width:48.533px;height:28.5px;background:#ffffff;"></div>
<div style="left:273.132px;top:557.3px;width:48.533px;height:12.3px;background:#696943;"></div>
<span style="left:275.63px;top:495.15px;font-size:8.8px;line-height:8.8px;color:#ecead8;letter-spacing:-0.35px;">Col5</span>
<span style="left:275.63px;top:559.75px;font-size:8.8px;line-height:8.8px;color:#ecead8;letter-spacing:-0.35px;">Table</span>
<div style="left:272.332px;top:528.8px;width:0.8px;height:28.5px;background:#c8c8c8;"></div>
<div style="left:272.332px;top:492.3px;width:0.8px;height:36.5px;background:#4a4a35;"></div>
<div style="left:272.332px;top:557.3px;width:0.8px;height:12.3px;background:#4a4a35;"></div>
<div style="left:322.465px;top:492.3px;width:48.533px;height:12px;background:#696943;"></div>
<div style="left:322.465px;top:504.3px;width:37px;height:12px;background:#cacb66;"></div>
<div style="left:359.465px;top:504.3px;width:11.533000000000001px;height:12px;background:#696943;"></div>
<div style="left:322.465px;top:516.3px;width:37px;height:12px;background:#e98a62;"></div>
<div style="left:359.465px;top:516.3px;width:11.533000000000001px;height:12px;background:#696943;"></div>
<div style="left:322.465px;top:504px;width:48.533px;height:0.8px;background:#4a4a35;"></div>
<div style="left:322.465px;top:516px;width:48.533px;height:0.8px;background:#4a4a35;"></div>
<div style="left:322.465px;top:528px;width:48.533px;height:0.8px;background:#4a4a35;"></div>
<svg style="position:absolute;left:334.465px;top:506px;" width="13" height="9" viewBox="0 0 13 9"><path d="M0.5 4.5Q6.5 -1.5 12.5 4.5Q6.5 10.5 0.5 4.5z" fill="#fff" stroke="#222" stroke-width="0.9"/><circle cx="6.5" cy="4.5" r="2.3" fill="#222"/><circle cx="7.2" cy="3.8" r="0.7" fill="#fff"/></svg>
<svg style="position:absolute;left:334.965px;top:517px;" width="12" height="11" viewBox="0 0 12 11"><circle cx="6" cy="5.5" r="4.8" fill="#fff" stroke="#222" stroke-width="0.9"/><rect x="3.6" y="3.1" width="4.8" height="4.8" fill="#1c1c1c"/></svg>
<svg style="position:absolute;left:360.965px;top:506px;" width="9" height="10" viewBox="0 0 9 10"><rect x="1" y="4" width="7" height="5" fill="#8a8a66"/><path d="M2.5 4V2.5a2 2 0 0 1 4 0V4" fill="none" stroke="#8a8a66" stroke-width="1.1"/></svg>
<svg style="position:absolute;left:361.965px;top:519.5px;" width="8" height="6" viewBox="0 0 8 6"><path d="M1 1h6L4 4.5z" fill="#f0f0f0"/></svg>
<div style="left:322.465px;top:528.8px;width:48.533px;height:28.5px;background:#ffffff;"></div>
<div style="left:322.465px;top:557.3px;width:48.533px;height:12.3px;background:#696943;"></div>
<span style="left:324.96px;top:495.15px;font-size:8.8px;line-height:8.8px;color:#ecead8;letter-spacing:-0.35px;">Col6</span>
<span style="left:324.96px;top:559.75px;font-size:8.8px;line-height:8.8px;color:#ecead8;letter-spacing:-0.35px;">Table</span>
<div style="left:321.66499999999996px;top:528.8px;width:0.8px;height:28.5px;background:#c8c8c8;"></div>
<div style="left:321.66499999999996px;top:492.3px;width:0.8px;height:36.5px;background:#4a4a35;"></div>
<div style="left:321.66499999999996px;top:557.3px;width:0.8px;height:12.3px;background:#4a4a35;"></div>
<div style="left:371.798px;top:492.3px;width:48.533px;height:12px;background:#696943;"></div>
<div style="left:371.798px;top:504.3px;width:37px;height:12px;background:#cacb66;"></div>
<div style="left:408.798px;top:504.3px;width:11.533000000000001px;height:12px;background:#696943;"></div>
<div style="left:371.798px;top:516.3px;width:37px;height:12px;background:#e98a62;"></div>
<div style="left:408.798px;top:516.3px;width:11.533000000000001px;height:12px;background:#696943;"></div>
<div style="left:371.798px;top:504px;width:48.533px;height:0.8px;background:#4a4a35;"></div>
<div style="left:371.798px;top:516px;width:48.533px;height:0.8px;background:#4a4a35;"></div>
<div style="left:371.798px;top:528px;width:48.533px;height:0.8px;background:#4a4a35;"></div>
<svg style="position:absolute;left:383.798px;top:506px;" width="13" height="9" viewBox="0 0 13 9"><path d="M0.5 4.5Q6.5 -1.5 12.5 4.5Q6.5 10.5 0.5 4.5z" fill="#fff" stroke="#222" stroke-width="0.9"/><circle cx="6.5" cy="4.5" r="2.3" fill="#222"/><circle cx="7.2" cy="3.8" r="0.7" fill="#fff"/></svg>
<svg style="position:absolute;left:384.298px;top:517px;" width="12" height="11" viewBox="0 0 12 11"><circle cx="6" cy="5.5" r="4.8" fill="#fff" stroke="#222" stroke-width="0.9"/><rect x="3.6" y="3.1" width="4.8" height="4.8" fill="#1c1c1c"/></svg>
<svg style="position:absolute;left:410.298px;top:506px;" width="9" height="10" viewBox="0 0 9 10"><rect x="1" y="4" width="7" height="5" fill="#8a8a66"/><path d="M2.5 4V2.5a2 2 0 0 1 4 0V4" fill="none" stroke="#8a8a66" stroke-width="1.1"/></svg>
<svg style="position:absolute;left:411.298px;top:519.5px;" width="8" height="6" viewBox="0 0 8 6"><path d="M1 1h6L4 4.5z" fill="#f0f0f0"/></svg>
<div style="left:371.798px;top:528.8px;width:48.533px;height:28.5px;background:#ffffff;"></div>
<div style="left:371.798px;top:557.3px;width:48.533px;height:12.3px;background:#696943;"></div>
<span style="left:374.30px;top:495.15px;font-size:8.8px;line-height:8.8px;color:#ecead8;letter-spacing:-0.35px;">Col7</span>
<span style="left:374.30px;top:559.75px;font-size:8.8px;line-height:8.8px;color:#ecead8;letter-spacing:-0.35px;">Table</span>
<div style="left:370.998px;top:528.8px;width:0.8px;height:28.5px;background:#c8c8c8;"></div>
<div style="left:370.998px;top:492.3px;width:0.8px;height:36.5px;background:#4a4a35;"></div>
<div style="left:370.998px;top:557.3px;width:0.8px;height:12.3px;background:#4a4a35;"></div>
<div style="left:421.13100000000003px;top:492.3px;width:48.533px;height:12px;background:#696943;"></div>
<div style="left:421.13100000000003px;top:504.3px;width:37px;height:12px;background:#cacb66;"></div>
<div style="left:458.13100000000003px;top:504.3px;width:11.533000000000001px;height:12px;background:#696943;"></div>
<div style="left:421.13100000000003px;top:516.3px;width:37px;height:12px;background:#e98a62;"></div>
<div style="left:458.13100000000003px;top:516.3px;width:11.533000000000001px;height:12px;background:#696943;"></div>
<div style="left:421.13100000000003px;top:504px;width:48.533px;height:0.8px;background:#4a4a35;"></div>
<div style="left:421.13100000000003px;top:516px;width:48.533px;height:0.8px;background:#4a4a35;"></div>
<div style="left:421.13100000000003px;top:528px;width:48.533px;height:0.8px;background:#4a4a35;"></div>
<svg style="position:absolute;left:433.13100000000003px;top:506px;" width="13" height="9" viewBox="0 0 13 9"><path d="M0.5 4.5Q6.5 -1.5 12.5 4.5Q6.5 10.5 0.5 4.5z" fill="#fff" stroke="#222" stroke-width="0.9"/><circle cx="6.5" cy="4.5" r="2.3" fill="#222"/><circle cx="7.2" cy="3.8" r="0.7" fill="#fff"/></svg>
<svg style="position:absolute;left:433.63100000000003px;top:517px;" width="12" height="11" viewBox="0 0 12 11"><circle cx="6" cy="5.5" r="4.8" fill="#fff" stroke="#222" stroke-width="0.9"/><rect x="3.6" y="3.1" width="4.8" height="4.8" fill="#1c1c1c"/></svg>
<svg style="position:absolute;left:459.63100000000003px;top:506px;" width="9" height="10" viewBox="0 0 9 10"><rect x="1" y="4" width="7" height="5" fill="#8a8a66"/><path d="M2.5 4V2.5a2 2 0 0 1 4 0V4" fill="none" stroke="#8a8a66" stroke-width="1.1"/></svg>
<svg style="position:absolute;left:460.63100000000003px;top:519.5px;" width="8" height="6" viewBox="0 0 8 6"><path d="M1 1h6L4 4.5z" fill="#f0f0f0"/></svg>
<div style="left:421.13100000000003px;top:528.8px;width:48.533px;height:28.5px;background:#ffffff;"></div>
<div style="left:421.13100000000003px;top:557.3px;width:48.533px;height:12.3px;background:#696943;"></div>
<span style="left:423.63px;top:495.15px;font-size:8.8px;line-height:8.8px;color:#ecead8;letter-spacing:-0.35px;">Col8</span>
<span style="left:423.63px;top:559.75px;font-size:8.8px;line-height:8.8px;color:#ecead8;letter-spacing:-0.35px;">Table</span>
<div style="left:420.331px;top:528.8px;width:0.8px;height:28.5px;background:#c8c8c8;"></div>
<div style="left:420.331px;top:492.3px;width:0.8px;height:36.5px;background:#4a4a35;"></div>
<div style="left:420.331px;top:557.3px;width:0.8px;height:12.3px;background:#4a4a35;"></div>
<div style="left:470.464px;top:492.3px;width:48.533px;height:12px;background:#696943;"></div>
<div style="left:470.464px;top:504.3px;width:37px;height:12px;background:#cacb66;"></div>
<div style="left:507.464px;top:504.3px;width:11.533000000000001px;height:12px;background:#696943;"></div>
<div style="left:470.464px;top:516.3px;width:37px;height:12px;background:#e98a62;"></div>
<div style="left:507.464px;top:516.3px;width:11.533000000000001px;height:12px;background:#696943;"></div>
<div style="left:470.464px;top:504px;width:48.533px;height:0.8px;background:#4a4a35;"></div>
<div style="left:470.464px;top:516px;width:48.533px;height:0.8px;background:#4a4a35;"></div>
<div style="left:470.464px;top:528px;width:48.533px;height:0.8px;background:#4a4a35;"></div>
<svg style="position:absolute;left:482.464px;top:506px;" width="13" height="9" viewBox="0 0 13 9"><path d="M0.5 4.5Q6.5 -1.5 12.5 4.5Q6.5 10.5 0.5 4.5z" fill="#fff" stroke="#222" stroke-width="0.9"/><circle cx="6.5" cy="4.5" r="2.3" fill="#222"/><circle cx="7.2" cy="3.8" r="0.7" fill="#fff"/></svg>
<svg style="position:absolute;left:482.964px;top:517px;" width="12" height="11" viewBox="0 0 12 11"><circle cx="6" cy="5.5" r="4.8" fill="#fff" stroke="#222" stroke-width="0.9"/><rect x="3.6" y="3.1" width="4.8" height="4.8" fill="#1c1c1c"/></svg>
<svg style="position:absolute;left:508.964px;top:506px;" width="9" height="10" viewBox="0 0 9 10"><rect x="1" y="4" width="7" height="5" fill="#8a8a66"/><path d="M2.5 4V2.5a2 2 0 0 1 4 0V4" fill="none" stroke="#8a8a66" stroke-width="1.1"/></svg>
<svg style="position:absolute;left:509.964px;top:519.5px;" width="8" height="6" viewBox="0 0 8 6"><path d="M1 1h6L4 4.5z" fill="#f0f0f0"/></svg>
<div style="left:470.464px;top:528.8px;width:48.533px;height:28.5px;background:#ffffff;"></div>
<div style="left:470.464px;top:557.3px;width:48.533px;height:12.3px;background:#696943;"></div>
<span style="left:472.96px;top:495.15px;font-size:8.8px;line-height:8.8px;color:#ecead8;letter-spacing:-0.35px;">Col9</span>
<span style="left:472.96px;top:559.75px;font-size:8.8px;line-height:8.8px;color:#ecead8;letter-spacing:-0.35px;">Table</span>
<div style="left:469.664px;top:528.8px;width:0.8px;height:28.5px;background:#c8c8c8;"></div>
<div style="left:469.664px;top:492.3px;width:0.8px;height:36.5px;background:#4a4a35;"></div>
<div style="left:469.664px;top:557.3px;width:0.8px;height:12.3px;background:#4a4a35;"></div>
<div style="left:519.7969999999999px;top:492.3px;width:48.533px;height:12px;background:#696943;"></div>
<div style="left:519.7969999999999px;top:504.3px;width:37px;height:12px;background:#cacb66;"></div>
<div style="left:556.7969999999999px;top:504.3px;width:11.533000000000001px;height:12px;background:#696943;"></div>
<div style="left:519.7969999999999px;top:516.3px;width:37px;height:12px;background:#e98a62;"></div>
<div style="left:556.7969999999999px;top:516.3px;width:11.533000000000001px;height:12px;background:#696943;"></div>
<div style="left:519.7969999999999px;top:504px;width:48.533px;height:0.8px;background:#4a4a35;"></div>
<div style="left:519.7969999999999px;top:516px;width:48.533px;height:0.8px;background:#4a4a35;"></div>
<div style="left:519.7969999999999px;top:528px;width:48.533px;height:0.8px;background:#4a4a35;"></div>
<svg style="position:absolute;left:531.7969999999999px;top:506px;" width="13" height="9" viewBox="0 0 13 9"><path d="M0.5 4.5Q6.5 -1.5 12.5 4.5Q6.5 10.5 0.5 4.5z" fill="#fff" stroke="#222" stroke-width="0.9"/><circle cx="6.5" cy="4.5" r="2.3" fill="#222"/><circle cx="7.2" cy="3.8" r="0.7" fill="#fff"/></svg>
<svg style="position:absolute;left:532.2969999999999px;top:517px;" width="12" height="11" viewBox="0 0 12 11"><circle cx="6" cy="5.5" r="4.8" fill="#fff" stroke="#222" stroke-width="0.9"/><rect x="3.6" y="3.1" width="4.8" height="4.8" fill="#1c1c1c"/></svg>
<svg style="position:absolute;left:558.2969999999999px;top:506px;" width="9" height="10" viewBox="0 0 9 10"><rect x="1" y="4" width="7" height="5" fill="#8a8a66"/><path d="M2.5 4V2.5a2 2 0 0 1 4 0V4" fill="none" stroke="#8a8a66" stroke-width="1.1"/></svg>
<svg style="position:absolute;left:559.2969999999999px;top:519.5px;" width="8" height="6" viewBox="0 0 8 6"><path d="M1 1h6L4 4.5z" fill="#f0f0f0"/></svg>
<div style="left:519.7969999999999px;top:528.8px;width:48.533px;height:28.5px;background:#ffffff;"></div>
<div style="left:519.7969999999999px;top:557.3px;width:48.533px;height:12.3px;background:#696943;"></div>
<span style="left:522.30px;top:495.15px;font-size:8.8px;line-height:8.8px;color:#ecead8;letter-spacing:-0.35px;">Col10</span>
<span style="left:522.30px;top:559.75px;font-size:8.8px;line-height:8.8px;color:#ecead8;letter-spacing:-0.35px;">Table</span>
<div style="left:518.997px;top:528.8px;width:0.8px;height:28.5px;background:#c8c8c8;"></div>
<div style="left:518.997px;top:492.3px;width:0.8px;height:36.5px;background:#4a4a35;"></div>
<div style="left:518.997px;top:557.3px;width:0.8px;height:12.3px;background:#4a4a35;"></div>
<div style="left:569.1299999999999px;top:492.3px;width:48.533px;height:12px;background:#696943;"></div>
<div style="left:569.1299999999999px;top:504.3px;width:37px;height:12px;background:#cacb66;"></div>
<div style="left:606.1299999999999px;top:504.3px;width:11.533000000000001px;height:12px;background:#696943;"></div>
<div style="left:569.1299999999999px;top:516.3px;width:37px;height:12px;background:#e98a62;"></div>
<div style="left:606.1299999999999px;top:516.3px;width:11.533000000000001px;height:12px;background:#696943;"></div>
<div style="left:569.1299999999999px;top:504px;width:48.533px;height:0.8px;background:#4a4a35;"></div>
<div style="left:569.1299999999999px;top:516px;width:48.533px;height:0.8px;background:#4a4a35;"></div>
<div style="left:569.1299999999999px;top:528px;width:48.533px;height:0.8px;background:#4a4a35;"></div>
<svg style="position:absolute;left:581.1299999999999px;top:506px;" width="13" height="9" viewBox="0 0 13 9"><path d="M0.5 4.5Q6.5 -1.5 12.5 4.5Q6.5 10.5 0.5 4.5z" fill="#fff" stroke="#222" stroke-width="0.9"/><circle cx="6.5" cy="4.5" r="2.3" fill="#222"/><circle cx="7.2" cy="3.8" r="0.7" fill="#fff"/></svg>
<svg style="position:absolute;left:581.6299999999999px;top:517px;" width="12" height="11" viewBox="0 0 12 11"><circle cx="6" cy="5.5" r="4.8" fill="#fff" stroke="#222" stroke-width="0.9"/><rect x="3.6" y="3.1" width="4.8" height="4.8" fill="#1c1c1c"/></svg>
<svg style="position:absolute;left:607.6299999999999px;top:506px;" width="9" height="10" viewBox="0 0 9 10"><rect x="1" y="4" width="7" height="5" fill="#8a8a66"/><path d="M2.5 4V2.5a2 2 0 0 1 4 0V4" fill="none" stroke="#8a8a66" stroke-width="1.1"/></svg>
<svg style="position:absolute;left:608.6299999999999px;top:519.5px;" width="8" height="6" viewBox="0 0 8 6"><path d="M1 1h6L4 4.5z" fill="#f0f0f0"/></svg>
<div style="left:569.1299999999999px;top:528.8px;width:48.533px;height:28.5px;background:#ffffff;"></div>
<div style="left:569.1299999999999px;top:557.3px;width:48.533px;height:12.3px;background:#696943;"></div>
<span style="left:571.63px;top:495.15px;font-size:8.8px;line-height:8.8px;color:#ecead8;letter-spacing:-0.35px;">Col11</span>
<span style="left:571.63px;top:559.75px;font-size:8.8px;line-height:8.8px;color:#ecead8;letter-spacing:-0.35px;">Table</span>
<div style="left:568.3299999999999px;top:528.8px;width:0.8px;height:28.5px;background:#c8c8c8;"></div>
<div style="left:568.3299999999999px;top:492.3px;width:0.8px;height:36.5px;background:#4a4a35;"></div>
<div style="left:568.3299999999999px;top:557.3px;width:0.8px;height:12.3px;background:#4a4a35;"></div>
<div style="left:618.463px;top:492.3px;width:48.533px;height:12px;background:#696943;"></div>
<div style="left:618.463px;top:504.3px;width:37px;height:12px;background:#cacb66;"></div>
<div style="left:655.463px;top:504.3px;width:11.533000000000001px;height:12px;background:#696943;"></div>
<div style="left:618.463px;top:516.3px;width:37px;height:12px;background:#e98a62;"></div>
<div style="left:655.463px;top:516.3px;width:11.533000000000001px;height:12px;background:#696943;"></div>
<div style="left:618.463px;top:504px;width:48.533px;height:0.8px;background:#4a4a35;"></div>
<div style="left:618.463px;top:516px;width:48.533px;height:0.8px;background:#4a4a35;"></div>
<div style="left:618.463px;top:528px;width:48.533px;height:0.8px;background:#4a4a35;"></div>
<svg style="position:absolute;left:630.463px;top:506px;" width="13" height="9" viewBox="0 0 13 9"><path d="M0.5 4.5Q6.5 -1.5 12.5 4.5Q6.5 10.5 0.5 4.5z" fill="#fff" stroke="#222" stroke-width="0.9"/><circle cx="6.5" cy="4.5" r="2.3" fill="#222"/><circle cx="7.2" cy="3.8" r="0.7" fill="#fff"/></svg>
<svg style="position:absolute;left:630.963px;top:517px;" width="12" height="11" viewBox="0 0 12 11"><circle cx="6" cy="5.5" r="4.8" fill="#fff" stroke="#222" stroke-width="0.9"/><rect x="3.6" y="3.1" width="4.8" height="4.8" fill="#1c1c1c"/></svg>
<svg style="position:absolute;left:656.963px;top:506px;" width="9" height="10" viewBox="0 0 9 10"><rect x="1" y="4" width="7" height="5" fill="#8a8a66"/><path d="M2.5 4V2.5a2 2 0 0 1 4 0V4" fill="none" stroke="#8a8a66" stroke-width="1.1"/></svg>
<svg style="position:absolute;left:657.963px;top:519.5px;" width="8" height="6" viewBox="0 0 8 6"><path d="M1 1h6L4 4.5z" fill="#f0f0f0"/></svg>
<div style="left:618.463px;top:528.8px;width:48.533px;height:28.5px;background:#ffffff;"></div>
<div style="left:618.463px;top:557.3px;width:48.533px;height:12.3px;background:#696943;"></div>
<span style="left:620.96px;top:495.15px;font-size:8.8px;line-height:8.8px;color:#ecead8;letter-spacing:-0.35px;">Col12</span>
<span style="left:620.96px;top:559.75px;font-size:8.8px;line-height:8.8px;color:#ecead8;letter-spacing:-0.35px;">Table</span>
<div style="left:617.663px;top:528.8px;width:0.8px;height:28.5px;background:#c8c8c8;"></div>
<div style="left:617.663px;top:492.3px;width:0.8px;height:36.5px;background:#4a4a35;"></div>
<div style="left:617.663px;top:557.3px;width:0.8px;height:12.3px;background:#4a4a35;"></div>
<div style="left:667.7959999999999px;top:492.3px;width:48.533px;height:76.9px;background:#4a4a4a;"></div>
<span style="left:670.30px;top:495.15px;font-size:8.8px;line-height:8.8px;color:#dedede;letter-spacing:-0.35px;">Col13</span>
<div style="left:666.996px;top:528.8px;width:0.8px;height:28.5px;background:#2e2e2e;"></div>
<div style="left:666.996px;top:492.3px;width:0.8px;height:36.5px;background:#2e2e2e;"></div>
<div style="left:666.996px;top:557.3px;width:0.8px;height:12.3px;background:#2e2e2e;"></div>
<div style="left:666.996px;top:492.3px;width:0.8px;height:76.3px;background:#2e2e2e;"></div>
<div style="left:717.1289999999999px;top:492.3px;width:48.533px;height:76.9px;background:#4a4a4a;"></div>
<span style="left:719.63px;top:495.15px;font-size:8.8px;line-height:8.8px;color:#dedede;letter-spacing:-0.35px;">Col14</span>
<div style="left:716.329px;top:528.8px;width:0.8px;height:28.5px;background:#2e2e2e;"></div>
<div style="left:716.329px;top:492.3px;width:0.8px;height:36.5px;background:#2e2e2e;"></div>
<div style="left:716.329px;top:557.3px;width:0.8px;height:12.3px;background:#2e2e2e;"></div>
<div style="left:716.329px;top:492.3px;width:0.8px;height:76.3px;background:#2e2e2e;"></div>
<div style="left:766.462px;top:492.3px;width:38.53800000000001px;height:76.9px;background:#4a4a4a;"></div>
<span style="left:768.96px;top:495.15px;font-size:8.8px;line-height:8.8px;color:#dedede;letter-spacing:-0.35px;">Col15</span>
<div style="left:765.662px;top:528.8px;width:0.8px;height:28.5px;background:#2e2e2e;"></div>
<div style="left:765.662px;top:492.3px;width:0.8px;height:36.5px;background:#2e2e2e;"></div>
<div style="left:765.662px;top:557.3px;width:0.8px;height:12.3px;background:#2e2e2e;"></div>
<div style="left:765.662px;top:492.3px;width:0.8px;height:76.3px;background:#2e2e2e;"></div>
<div style="left:666.996px;top:492.3px;width:0.8px;height:76.3px;background:#2e2e2e;"></div>
<svg style="position:absolute;left:76.0px;top:529px;" width="48" height="28" viewBox="0 0 48 28"><path d="M20 14h8M24 10v8" stroke="#e6e6ee" stroke-width="0.6"/></svg>
<svg style="position:absolute;left:125.333px;top:529px;" width="48" height="28" viewBox="0 0 48 28"><g transform="translate(24.5 14.5) scale(0.88) translate(-24 -14.5)"><path d="M24 1.8C30 1.8 35 9 35.5 16C36 23 31 27 24 27C17 27 12 23 12.5 16C13 9 18 1.8 24 1.8z" fill="#ffb9b9" stroke="#555" stroke-width="0.8"/><path d="M12.8 13.5C16 16 20 17.5 24 17C29 16.5 32 14.5 35.3 13L35.5 16C36 23 31 27 24 27C17 27 12 23 12.5 16z" fill="#0012c8" stroke="#555" stroke-width="0.6"/></g></svg>
<svg style="position:absolute;left:174.666px;top:529px;" width="48" height="28" viewBox="0 0 48 28"><path d="M7 6C9 3 14 2.5 17 3.5L16 4.5C13 4 10 5 7 6z" fill="none" stroke="#666" stroke-width="0.8"/><path d="M41 6C39 3 34 2.5 31.5 3.5L32.5 4.5C35 4 38 5 41 6z" fill="none" stroke="#666" stroke-width="0.8"/><ellipse cx="13" cy="16" rx="4" ry="8.5" fill="none" stroke="#555" stroke-width="0.9"/><ellipse cx="13" cy="16.5" rx="1.6" ry="4" fill="none" stroke="#555" stroke-width="0.8"/><ellipse cx="33" cy="16" rx="4" ry="8.5" fill="none" stroke="#555" stroke-width="0.9"/><ellipse cx="33" cy="16.5" rx="1.6" ry="4" fill="none" stroke="#555" stroke-width="0.8"/></svg>
<svg style="position:absolute;left:223.999px;top:529px;" width="48" height="28" viewBox="0 0 48 28"><path d="M5 8C7 13 10 20 24 20C37 20 40 13 42 8M5 8l1 4M42 8l-1 4" fill="none" stroke="#111" stroke-width="1.6"/></svg>
<svg style="position:absolute;left:273.332px;top:529px;" width="48" height="28" viewBox="0 0 48 28"><path d="M6 10C10 12 18 14 24 13C30 12 36 10 41 9C42 12 41 16 38 18C32 21 20 22 12 20C8 19 6 16 6 10z" fill="none" stroke="#111" stroke-width="1.1"/><path d="M8 11L9 19" stroke="#111" stroke-width="0.8"/></svg>
<svg style="position:absolute;left:322.66499999999996px;top:529px;" width="48" height="28" viewBox="0 0 48 28"><path d="M6 9C10 11 18 13 24 12C30 11 36 10 41 9C42 12 41 16 38 18C32 21 20 22 12 20C8 19 6 16 6 9z" fill="none" stroke="#111" stroke-width="1.1"/><path d="M39 10L38 18" stroke="#111" stroke-width="0.8"/></svg>
<svg style="position:absolute;left:371.998px;top:529px;" width="48" height="28" viewBox="0 0 48 28"><path d="M12 12C14 7 17 3 20 4C22 6 21 9 19 11C26 8 34 6 38 7C40 9 37 11 33 12C38 12 42 13 42 16C41 18 37 18 34 18C38 19 39 21 37 23C33 24 26 24 20 24C16 25 12 24 10 22C8 18 9 14 12 12z" fill="none" stroke="#111" stroke-width="1.3"/><path d="M34 11v10" stroke="#111" stroke-width="1"/></svg>
<svg style="position:absolute;left:421.331px;top:529px;" width="48" height="28" viewBox="0 0 48 28"><path d="M36 12C34 7 31 3 28 4C26 6 27 9 29 11C22 8 14 6 10 7C8 9 11 11 15 12C10 12 6 13 6 16C7 18 11 18 14 18C10 19 9 21 11 23C15 24 22 24 28 24C32 25 36 24 38 22C40 18 39 14 36 12z" fill="none" stroke="#111" stroke-width="1.3"/><path d="M14 11v10" stroke="#111" stroke-width="1"/></svg>
<svg style="position:absolute;left:470.664px;top:529px;" width="48" height="28" viewBox="0 0 48 28"><path d="M20 5C24 4 26 3 27 3C28 8 27 14 26 18C25 21 25 24 26 26L22 26C21 22 22 18 22 14C22 10 21 7 20 5z" fill="none" stroke="#111" stroke-width="1"/></svg>
<svg style="position:absolute;left:519.997px;top:529px;" width="48" height="28" viewBox="0 0 48 28"><path d="M8 19C12 14 18 9 27 8C33 7 38 7 40 8L40 20C30 21 18 21 8 19z" fill="none" stroke="#111" stroke-width="1.2"/></svg>
<svg style="position:absolute;left:569.3299999999999px;top:529px;" width="48" height="28" viewBox="0 0 48 28"><path d="M27 5C25 4 23 3 21 3C20 8 21 14 22 18C23 21 23 24 22 26L26 26C27 22 26 18 26 14C26 10 27 7 27 5z" fill="none" stroke="#111" stroke-width="1"/></svg>
<svg style="position:absolute;left:618.663px;top:529px;" width="48" height="28" viewBox="0 0 48 28"><path d="M7 7L10 20C20 21 32 21 40 19C38 14 32 10 26 9C20 8 14 7 7 7z" fill="none" stroke="#111" stroke-width="1.2"/></svg>
<div style="left:26px;top:570px;width:790px;height:110px;background:#474747;"></div>
<div style="left:26px;top:572px;width:49px;height:108px;background:#3d3d3d;"></div>
<div style="left:75px;top:572px;width:731px;height:108px;background:#3e3e3e;"></div>
<div style="left:26px;top:584.5px;width:780px;height:0.8px;background:#333333;"></div>
<span style="left:-134.00px;top:574.58px;width:200px;text-align:right;font-size:9px;line-height:9px;color:#ffffff;letter-spacing:0px;-webkit-text-stroke:0.35px;">1</span>
<div style="left:26px;top:597.8px;width:780px;height:0.8px;background:#333333;"></div>
<span style="left:-134.00px;top:587.88px;width:200px;text-align:right;font-size:9px;line-height:9px;color:#ececec;letter-spacing:0px;-webkit-text-stroke:0.35px;">2</span>
<div style="left:26px;top:611.1px;width:780px;height:0.8px;background:#333333;"></div>
<span style="left:-134.00px;top:601.18px;width:200px;text-align:right;font-size:9px;line-height:9px;color:#ececec;letter-spacing:0px;-webkit-text-stroke:0.35px;">3</span>
<div style="left:26px;top:624.4px;width:780px;height:0.8px;background:#333333;"></div>
<span style="left:-134.00px;top:614.48px;width:200px;text-align:right;font-size:9px;line-height:9px;color:#ececec;letter-spacing:0px;-webkit-text-stroke:0.35px;">4</span>
<div style="left:26px;top:637.7px;width:780px;height:0.8px;background:#333333;"></div>
<span style="left:-134.00px;top:627.78px;width:200px;text-align:right;font-size:9px;line-height:9px;color:#ececec;letter-spacing:0px;-webkit-text-stroke:0.35px;">5</span>
<div style="left:26px;top:651.0px;width:780px;height:0.8px;background:#333333;"></div>
<span style="left:-134.00px;top:641.08px;width:200px;text-align:right;font-size:9px;line-height:9px;color:#ececec;letter-spacing:0px;-webkit-text-stroke:0.35px;">6</span>
<div style="left:26px;top:664.3px;width:780px;height:0.8px;background:#333333;"></div>
<span style="left:-134.00px;top:654.38px;width:200px;text-align:right;font-size:9px;line-height:9px;color:#ececec;letter-spacing:0px;-webkit-text-stroke:0.35px;">7</span>
<div style="left:26px;top:677.6px;width:780px;height:0.8px;background:#333333;"></div>
<span style="left:-134.00px;top:667.68px;width:200px;text-align:right;font-size:9px;line-height:9px;color:#ececec;letter-spacing:0px;-webkit-text-stroke:0.35px;">8</span>
<div style="left:28px;top:572px;width:47px;height:12.5px;background:#5b6e99;"></div>
<svg style="position:absolute;left:26.5px;top:572px;" width="17" height="12.5" viewBox="0 0 17 12.5"><circle cx="8.5" cy="6.2" r="6" fill="#20b030"/><path d="M2.5 6.2A6 6 0 0 1 14.5 6.2z" fill="#e02828"/><rect x="2" y="5.6" width="13" height="1" fill="#6a6a6a"/></svg>
<svg style="position:absolute;left:44px;top:572px;" width="8" height="12.5" viewBox="0 0 8 12.5"><path d="M0.5 6.2L7 0.5H0.5z M0.5 6.2L7 12H0.5z" fill="#c0c0c0"/><path d="M7 0.5L1 6.2L7 12" fill="none" stroke="#222" stroke-width="1"/></svg>
<span style="left:-134.00px;top:574.58px;width:200px;text-align:right;font-size:9px;line-height:9px;color:#ffffff;letter-spacing:0px;-webkit-text-stroke:0.35px;">1</span>
<div style="left:26px;top:651.0px;width:780px;height:1px;background:#3a8aaa;"></div>
<div style="left:75.0px;top:572px;width:0.8px;height:108px;background:#2c2c2c;"></div>
<div style="left:124.333px;top:572px;width:0.8px;height:108px;background:#2c2c2c;"></div>
<div style="left:173.666px;top:572px;width:0.8px;height:108px;background:#2c2c2c;"></div>
<div style="left:222.999px;top:572px;width:0.8px;height:108px;background:#2c2c2c;"></div>
<div style="left:272.332px;top:572px;width:0.8px;height:108px;background:#2c2c2c;"></div>
<div style="left:321.66499999999996px;top:572px;width:0.8px;height:108px;background:#2c2c2c;"></div>
<div style="left:370.998px;top:572px;width:0.8px;height:108px;background:#2c2c2c;"></div>
<div style="left:420.331px;top:572px;width:0.8px;height:108px;background:#2c2c2c;"></div>
<div style="left:469.664px;top:572px;width:0.8px;height:108px;background:#2c2c2c;"></div>
<div style="left:518.997px;top:572px;width:0.8px;height:108px;background:#2c2c2c;"></div>
<div style="left:568.3299999999999px;top:572px;width:0.8px;height:108px;background:#2c2c2c;"></div>
<div style="left:617.663px;top:572px;width:0.8px;height:108px;background:#2c2c2c;"></div>
<div style="left:666.996px;top:572px;width:0.8px;height:108px;background:#2c2c2c;"></div>
<div style="left:716.329px;top:572px;width:0.8px;height:108px;background:#2c2c2c;"></div>
<div style="left:765.662px;top:572px;width:0.8px;height:108px;background:#2c2c2c;"></div>
<div style="left:814.995px;top:572px;width:0.8px;height:108px;background:#2c2c2c;"></div>
<div style="left:75.8px;top:572px;width:48.533px;height:12.5px;background:#5f5f5f;"></div>
<div style="left:75.8px;top:572px;width:3px;height:12.5px;background:#9a9a9a;"></div>
<span style="left:80.30px;top:574.55px;font-size:8.8px;line-height:8.8px;color:#d8d8d8;letter-spacing:-0.3px;">zeg</span>
<span style="left:-78.17px;top:574.55px;width:200px;text-align:right;font-size:8.8px;line-height:8.8px;color:#d8d8d8;letter-spacing:0px;">1</span>
<svg style="position:absolute;left:75.8px;top:585.3px;" width="48.533" height="13.3" viewBox="0 0 48.533 13.3"><path d="M0 0.5L48.533 12.3M0 12.3L48.533 0.5" stroke="#8a8a8a" stroke-width="0.6"/></svg>
<div style="left:125.133px;top:572px;width:48.533px;height:12.5px;background:#7d7c52;"></div>
<div style="left:125.133px;top:572px;width:3px;height:12.5px;background:#c4c39a;"></div>
<span style="left:129.63px;top:574.55px;font-size:8.8px;line-height:8.8px;color:#ecebd6;letter-spacing:-0.3px;">JF</span>
<span style="left:-28.83px;top:574.55px;width:200px;text-align:right;font-size:8.8px;line-height:8.8px;color:#ecebd6;letter-spacing:0px;">1</span>
<svg style="position:absolute;left:125.133px;top:585.3px;" width="48.533" height="13.3" viewBox="0 0 48.533 13.3"><path d="M0 0.5L48.533 12.3M0 12.3L48.533 0.5" stroke="#8a8a8a" stroke-width="0.6"/></svg>
<div style="left:174.466px;top:572px;width:48.533px;height:12.5px;background:#7d7c52;"></div>
<div style="left:174.466px;top:572px;width:3px;height:12.5px;background:#c4c39a;"></div>
<div style="left:174.466px;top:572px;width:48.533px;height:12.5px;background:#8d8c60;border:1px solid #1a1a1a;"></div>
<div style="left:175.466px;top:573px;width:3px;height:10.5px;background:#c4c39a;"></div>
<span style="left:178.97px;top:574.55px;font-size:8.8px;line-height:8.8px;color:#ecebd6;letter-spacing:-0.3px;">JG</span>
<span style="left:20.50px;top:574.55px;width:200px;text-align:right;font-size:8.8px;line-height:8.8px;color:#ecebd6;letter-spacing:0px;">1</span>
<svg style="position:absolute;left:174.466px;top:585.3px;" width="48.533" height="13.3" viewBox="0 0 48.533 13.3"><path d="M0 0.5L48.533 12.3M0 12.3L48.533 0.5" stroke="#8a8a8a" stroke-width="0.6"/></svg>
<div style="left:223.799px;top:572px;width:48.533px;height:12.5px;background:#7d7c52;"></div>
<div style="left:223.799px;top:572px;width:3px;height:12.5px;background:#c4c39a;"></div>
<span style="left:228.30px;top:574.55px;font-size:8.8px;line-height:8.8px;color:#ecebd6;letter-spacing:-0.3px;">JH</span>
<span style="left:69.83px;top:574.55px;width:200px;text-align:right;font-size:8.8px;line-height:8.8px;color:#ecebd6;letter-spacing:0px;">1</span>
<svg style="position:absolute;left:223.799px;top:585.3px;" width="48.533" height="13.3" viewBox="0 0 48.533 13.3"><path d="M0 0.5L48.533 12.3M0 12.3L48.533 0.5" stroke="#8a8a8a" stroke-width="0.6"/></svg>
<div style="left:273.132px;top:572px;width:48.533px;height:12.5px;background:#7d7c52;"></div>
<div style="left:273.132px;top:572px;width:3px;height:12.5px;background:#c4c39a;"></div>
<span style="left:277.63px;top:574.55px;font-size:8.8px;line-height:8.8px;color:#ecebd6;letter-spacing:-0.3px;">JI</span>
<span style="left:119.17px;top:574.55px;width:200px;text-align:right;font-size:8.8px;line-height:8.8px;color:#ecebd6;letter-spacing:0px;">1</span>
<svg style="position:absolute;left:273.132px;top:585.3px;" width="48.533" height="13.3" viewBox="0 0 48.533 13.3"><path d="M0 0.5L48.533 12.3M0 12.3L48.533 0.5" stroke="#8a8a8a" stroke-width="0.6"/></svg>
<div style="left:322.465px;top:572px;width:48.533px;height:12.5px;background:#7d7c52;"></div>
<div style="left:322.465px;top:572px;width:3px;height:12.5px;background:#c4c39a;"></div>
<span style="left:326.96px;top:574.55px;font-size:8.8px;line-height:8.8px;color:#ecebd6;letter-spacing:-0.3px;">JJ</span>
<span style="left:168.50px;top:574.55px;width:200px;text-align:right;font-size:8.8px;line-height:8.8px;color:#ecebd6;letter-spacing:0px;">1</span>
<svg style="position:absolute;left:322.465px;top:585.3px;" width="48.533" height="13.3" viewBox="0 0 48.533 13.3"><path d="M0 0.5L48.533 12.3M0 12.3L48.533 0.5" stroke="#8a8a8a" stroke-width="0.6"/></svg>
<div style="left:371.798px;top:572px;width:48.533px;height:12.5px;background:#7d7c52;"></div>
<div style="left:371.798px;top:572px;width:3px;height:12.5px;background:#c4c39a;"></div>
<span style="left:376.30px;top:574.55px;font-size:8.8px;line-height:8.8px;color:#ecebd6;letter-spacing:-0.3px;">JK</span>
<span style="left:217.83px;top:574.55px;width:200px;text-align:right;font-size:8.8px;line-height:8.8px;color:#ecebd6;letter-spacing:0px;">1</span>
<svg style="position:absolute;left:371.798px;top:585.3px;" width="48.533" height="13.3" viewBox="0 0 48.533 13.3"><path d="M0 0.5L48.533 12.3M0 12.3L48.533 0.5" stroke="#8a8a8a" stroke-width="0.6"/></svg>
<div style="left:421.13100000000003px;top:572px;width:48.533px;height:12.5px;background:#7d7c52;"></div>
<div style="left:421.13100000000003px;top:572px;width:3px;height:12.5px;background:#c4c39a;"></div>
<span style="left:425.63px;top:574.55px;font-size:8.8px;line-height:8.8px;color:#ecebd6;letter-spacing:-0.3px;">JL</span>
<span style="left:267.16px;top:574.55px;width:200px;text-align:right;font-size:8.8px;line-height:8.8px;color:#ecebd6;letter-spacing:0px;">1</span>
<svg style="position:absolute;left:421.13100000000003px;top:585.3px;" width="48.533" height="13.3" viewBox="0 0 48.533 13.3"><path d="M0 0.5L48.533 12.3M0 12.3L48.533 0.5" stroke="#8a8a8a" stroke-width="0.6"/></svg>
<div style="left:470.464px;top:572px;width:48.533px;height:12.5px;background:#7d7c52;"></div>
<div style="left:470.464px;top:572px;width:3px;height:12.5px;background:#c4c39a;"></div>
<span style="left:474.96px;top:574.55px;font-size:8.8px;line-height:8.8px;color:#ecebd6;letter-spacing:-0.3px;">JN</span>
<span style="left:316.50px;top:574.55px;width:200px;text-align:right;font-size:8.8px;line-height:8.8px;color:#ecebd6;letter-spacing:0px;">1</span>
<svg style="position:absolute;left:470.464px;top:585.3px;" width="48.533" height="13.3" viewBox="0 0 48.533 13.3"><path d="M0 0.5L48.533 12.3M0 12.3L48.533 0.5" stroke="#8a8a8a" stroke-width="0.6"/></svg>
<div style="left:519.7969999999999px;top:572px;width:48.533px;height:12.5px;background:#7d7c52;"></div>
<div style="left:519.7969999999999px;top:572px;width:3px;height:12.5px;background:#c4c39a;"></div>
<span style="left:524.30px;top:574.55px;font-size:8.8px;line-height:8.8px;color:#ecebd6;letter-spacing:-0.3px;">JM</span>
<span style="left:365.83px;top:574.55px;width:200px;text-align:right;font-size:8.8px;line-height:8.8px;color:#ecebd6;letter-spacing:0px;">1</span>
<svg style="position:absolute;left:519.7969999999999px;top:585.3px;" width="48.533" height="13.3" viewBox="0 0 48.533 13.3"><path d="M0 0.5L48.533 12.3M0 12.3L48.533 0.5" stroke="#8a8a8a" stroke-width="0.6"/></svg>
<div style="left:569.1299999999999px;top:572px;width:48.533px;height:12.5px;background:#7d7c52;"></div>
<div style="left:569.1299999999999px;top:572px;width:3px;height:12.5px;background:#c4c39a;"></div>
<span style="left:573.63px;top:574.55px;font-size:8.8px;line-height:8.8px;color:#ecebd6;letter-spacing:-0.3px;">JO</span>
<span style="left:415.16px;top:574.55px;width:200px;text-align:right;font-size:8.8px;line-height:8.8px;color:#ecebd6;letter-spacing:0px;">1</span>
<svg style="position:absolute;left:569.1299999999999px;top:585.3px;" width="48.533" height="13.3" viewBox="0 0 48.533 13.3"><path d="M0 0.5L48.533 12.3M0 12.3L48.533 0.5" stroke="#8a8a8a" stroke-width="0.6"/></svg>
<div style="left:618.463px;top:572px;width:48.533px;height:12.5px;background:#7d7c52;"></div>
<div style="left:618.463px;top:572px;width:3px;height:12.5px;background:#c4c39a;"></div>
<span style="left:622.96px;top:574.55px;font-size:8.8px;line-height:8.8px;color:#ecebd6;letter-spacing:-0.3px;">JP</span>
<span style="left:464.50px;top:574.55px;width:200px;text-align:right;font-size:8.8px;line-height:8.8px;color:#ecebd6;letter-spacing:0px;">1</span>
<svg style="position:absolute;left:618.463px;top:585.3px;" width="48.533" height="13.3" viewBox="0 0 48.533 13.3"><path d="M0 0.5L48.533 12.3M0 12.3L48.533 0.5" stroke="#8a8a8a" stroke-width="0.6"/></svg>
<div style="left:806px;top:569px;width:10px;height:111px;background:#474747;"></div>
<svg style="position:absolute;left:808px;top:571.5px;" width="7" height="5" viewBox="0 0 7 5"><path d="M0.5 4.5L3.5 0.5 6.5 4.5z" fill="#d0d0d0"/></svg>
<div style="left:808.5px;top:580px;width:5.5px;height:96px;background:#5e5e5e;border-radius:3px;"></div>
<svg style="position:absolute;left:808px;top:676px;" width="7" height="5" viewBox="0 0 7 5"><path d="M0.5 0.5L3.5 4.5 6.5 0.5z" fill="#d0d0d0"/></svg>
<div style="left:75px;top:680.5px;width:741px;height:12.2px;background:#474747;"></div>
<svg style="position:absolute;left:78px;top:682px;" width="5" height="7" viewBox="0 0 5 7"><path d="M4.5 0.5v6L0.5 3.5z" fill="#d0d0d0"/></svg>
<div style="left:86px;top:682px;width:706px;height:6px;background:#5e5e5e;border-radius:3px;"></div>
<svg style="position:absolute;left:796px;top:682px;" width="5" height="7" viewBox="0 0 5 7"><path d="M0.5 0.5v6L4.5 3.5z" fill="#d0d0d0"/></svg>
<div style="left:26px;top:680.5px;width:49px;height:12.2px;background:#444444;"></div>
<div style="left:818.5px;top:49.5px;width:230.5px;height:190.5px;background:#474747;"></div>
<div style="left:818.5px;top:49.5px;width:230.5px;height:14.3px;background:#3e3e3e;"></div>
<span style="left:825.50px;top:52.72px;font-size:8.6px;line-height:8.6px;color:#a8a8a8;letter-spacing:-0.3px;">Color Model&nbsp;&nbsp;::&nbsp;&nbsp;Zoom : 100 %</span>
<div style="left:818.5px;top:64px;width:230.5px;height:141.5px;background:#000000;"></div>
<div style="left:818.5px;top:205.5px;width:230.5px;height:0.8px;background:#3a3a3a;"></div>
<div style="left:820px;top:208.9px;width:15px;height:13.5px;background:#5c84ab;"></div>
<div style="left:822.5px;top:211px;width:10px;height:10px;background:#e8d22a;"></div>
<div style="left:824.5px;top:213px;width:6px;height:6px;background:#f5f5f5;"></div>
<svg style="position:absolute;left:839.5px;top:210.5px;" width="11" height="11" viewBox="0 0 11 11"><rect x="0.5" y="0.5" width="10" height="10" fill="#eee"/><rect x="2.5" y="2.5" width="6" height="6" fill="#000"/></svg>
<svg style="position:absolute;left:856.5px;top:210.5px;" width="11" height="11" viewBox="0 0 11 11"><rect x="0.5" y="0.5" width="10" height="10" fill="#eee"/><rect x="2.5" y="2.5" width="6" height="6" fill="none" stroke="#666" stroke-width="1"/><rect x="3.5" y="5" width="3" height="3" fill="#aaa"/></svg>
<div style="left:873px;top:208px;width:1px;height:15px;background:#3a3a3a;"></div>
<svg style="position:absolute;left:879px;top:211px;" width="12" height="10" viewBox="0 0 12 10"><rect x="1" y="0.5" width="1.6" height="9" fill="#e6e6e6"/><path d="M11 0.5v9L3 5z" fill="#e6e6e6"/></svg>
<svg style="position:absolute;left:896px;top:211px;" width="12" height="10" viewBox="0 0 12 10"><path d="M8 0.5v9L0.5 5z" fill="#e6e6e6"/><rect x="9.5" y="0.5" width="1.6" height="9" fill="#e6e6e6"/></svg>
<div style="left:910.8px;top:208.5px;width:16px;height:14.5px;background:#5c84ab;"></div>
<svg style="position:absolute;left:913px;top:211px;" width="12" height="10" viewBox="0 0 12 10"><rect x="3" y="0.5" width="2" height="9" fill="#f0f0f0"/><rect x="7" y="0.5" width="2" height="9" fill="#f0f0f0"/></svg>
<svg style="position:absolute;left:930.5px;top:211px;" width="12" height="10" viewBox="0 0 12 10"><path d="M1.5 0v10l9.5-5z" fill="#e6e6e6"/></svg>
<svg style="position:absolute;left:947.5px;top:211px;" width="12" height="10" viewBox="0 0 12 10"><path d="M1 4.5V2.5h8M7 0.5l2.5 2-2.5 2M11 5.5v2H3M5 9.5l-2.5-2 2.5-2" fill="none" stroke="#e6e6e6" stroke-width="1.4"/></svg>
<svg style="position:absolute;left:964.5px;top:211px;" width="12" height="10" viewBox="0 0 12 10"><rect x="0.8" y="0.5" width="1.6" height="9" fill="#e6e6e6"/><path d="M3.5 0.5v9L11 5z" fill="#e6e6e6"/></svg>
<svg style="position:absolute;left:982px;top:211px;" width="12" height="10" viewBox="0 0 12 10"><path d="M1 0.5v9L9 5z" fill="#e6e6e6"/><rect x="9.4" y="0.5" width="1.6" height="9" fill="#e6e6e6"/></svg>
<div style="left:999.7px;top:208px;width:1px;height:15px;background:#3a3a3a;"></div>
<div style="left:818.5px;top:224px;width:230.5px;height:0.8px;background:#3a3a3a;"></div>
<div style="left:820px;top:226px;width:25px;height:12px;background:#373737;"></div>
<span style="left:823.00px;top:228.22px;font-size:8.6px;line-height:8.6px;color:#d8d8d8;letter-spacing:-0.4px;">1</span>
<div style="left:850.5px;top:227.5px;width:196px;height:8.5px;background:#3a3a3a;border:1px solid #5e5e5e;border-radius:2px;"></div>
<div style="left:851.5px;top:228.5px;width:194px;height:6.5px;background:#525252;"></div>
<div style="left:1051px;top:49.5px;width:229px;height:105.5px;background:#3b3b3b;"></div>
<div style="left:1051px;top:49.5px;width:229px;height:14.3px;background:#3e3e3e;"></div>
<span style="left:1058.30px;top:52.72px;font-size:8.6px;line-height:8.6px;color:#a8a8a8;letter-spacing:-0.3px;">ZegPalete : Studio Palette</span>
<div style="left:1051px;top:63.8px;width:229px;height:0.8px;background:#333;"></div>
<svg style="position:absolute;left:1053.5px;top:67.5px;" width="6" height="6" viewBox="0 0 6 6"><path d="M1 0.5v5l4-2.5z" fill="#bdbdbd"/></svg>
<svg style="position:absolute;left:1053px;top:80px;" width="6" height="6" viewBox="0 0 6 6"><path d="M0.5 1h5l-2.5 4z" fill="#bdbdbd"/></svg>
<svg style="position:absolute;left:1064.5px;top:66px;" width="11" height="9" viewBox="0 0 11 9"><path d="M0.5 1.5h4l1 1.5h5v5.5h-10z" fill="#f5a623"/></svg>
<svg style="position:absolute;left:1064.5px;top:78.5px;" width="12" height="9" viewBox="0 0 12 9"><path d="M0.5 1.5h4l1 1.5h4v1.5h-9z" fill="#f5a623"/><path d="M0.5 8.5l2-4.5h9l-2 4.5z" fill="#f9b94a"/></svg>
<span style="left:1080.50px;top:66.35px;font-size:8.8px;line-height:8.8px;color:#e6e6e6;letter-spacing:-0.52px;">Global Palettes</span>
<span style="left:1080.50px;top:78.85px;font-size:8.8px;line-height:8.8px;color:#e6e6e6;letter-spacing:-0.52px;">Project Palettes</span>
<div style="left:1075px;top:92px;width:7.5px;height:6px;background:#c4a84a;"></div>
<span style="left:1090.00px;top:91.55px;font-size:8.8px;line-height:8.8px;color:#e6e6e6;letter-spacing:-0.52px;">BiguPalete</span>
<svg style="position:absolute;left:1074.5px;top:104px;" width="9" height="8" viewBox="0 0 9 8"><path d="M0 1h8.5M0 4h8.5M0 7h8.5" stroke="#d4b84a" stroke-width="1.4"/></svg>
<span style="left:1090.00px;top:104.05px;font-size:8.8px;line-height:8.8px;color:#e6e6e6;letter-spacing:-0.52px;">Raster_Drawing_Palette</span>
<div style="left:1070px;top:115px;width:210px;height:12.8px;background:#5a89b0;"></div>
<svg style="position:absolute;left:1074.5px;top:117.5px;" width="9" height="8" viewBox="0 0 9 8"><path d="M0 1h8.5M0 4h8.5M0 7h8.5" stroke="#d4b84a" stroke-width="1.4"/></svg>
<span style="left:1090.00px;top:116.85px;font-size:8.8px;line-height:8.8px;color:#f4f4f4;letter-spacing:-0.52px;">ZegPalete</span>
<div style="left:1051px;top:155px;width:229px;height:2.5px;background:#2a2a2a;"></div>
<div style="left:1051px;top:157.5px;width:229px;height:14px;background:#3a3a3a;"></div>
<div style="left:1051px;top:157.5px;width:80px;height:14px;background:#474747;"></div>
<svg style="position:absolute;left:1056px;top:161px;" width="9" height="7" viewBox="0 0 9 7"><rect x="0.3" y="0.3" width="1.4" height="1.4" fill="#d8d8d8"/><rect x="0.3" y="2.5" width="1.4" height="1.4" fill="#d8d8d8"/><rect x="0.3" y="4.7" width="1.4" height="1.4" fill="#d8d8d8"/><rect x="2.4" y="0.3" width="1.4" height="1.4" fill="#d8d8d8"/><rect x="2.4" y="2.5" width="1.4" height="1.4" fill="#d8d8d8"/><rect x="2.4" y="4.7" width="1.4" height="1.4" fill="#d8d8d8"/><rect x="4.5" y="0.3" width="1.4" height="1.4" fill="#d8d8d8"/><rect x="4.5" y="2.5" width="1.4" height="1.4" fill="#d8d8d8"/><rect x="4.5" y="4.7" width="1.4" height="1.4" fill="#d8d8d8"/><rect x="6.6000000000000005" y="0.3" width="1.4" height="1.4" fill="#d8d8d8"/><rect x="6.6000000000000005" y="2.5" width="1.4" height="1.4" fill="#d8d8d8"/><rect x="6.6000000000000005" y="4.7" width="1.4" height="1.4" fill="#d8d8d8"/></svg>
<span style="left:1069.00px;top:160.05px;width:60px;text-align:center;font-size:8.8px;line-height:8.8px;color:#e6e6e6;letter-spacing:-0.2px;">colors</span>
<svg style="position:absolute;left:1152px;top:159.5px;" width="10" height="10" viewBox="0 0 10 10"><path d="M0.5 0.5h7.5l1.5 1.5v8h-9z" fill="#e8e8e8"/><rect x="2" y="0.5" width="5" height="3" fill="#3a3a3a"/><rect x="2" y="6" width="6" height="3.5" fill="#3a3a3a"/></svg>
<svg style="position:absolute;left:1169.5px;top:160.0px;" width="8" height="9" viewBox="0 0 8 9"><path d="M7 0.5v8L1 4.5z" fill="#5d5d5d"/></svg>
<div style="left:1182.5px;top:158.5px;width:10px;height:12.5px;background:#7a7a7a;"></div>
<svg style="position:absolute;left:1183.5px;top:159.5px;" width="8" height="11" viewBox="0 0 8 11"><circle cx="4" cy="3" r="2.2" fill="none" stroke="#f0f0f0" stroke-width="1.3"/><path d="M4 5v5M4 8h2" stroke="#f0f0f0" stroke-width="1.3"/></svg>
<svg style="position:absolute;left:1197.5px;top:160.0px;" width="8" height="9" viewBox="0 0 8 9"><path d="M1 0.5v8L7 4.5z" fill="#5d5d5d"/></svg>
<div style="left:1209.4px;top:157.5px;width:1px;height:14px;background:#2e2e2e;"></div>
<svg style="position:absolute;left:1212.5px;top:160.5px;" width="11" height="8" viewBox="0 0 11 8"><path d="M0.5 2.5h2v-2h8v7h-10z" fill="#e8e8e8"/><path d="M0.5 2.5h6v5" fill="none" stroke="#3a3a3a" stroke-width="0.7"/></svg>
<svg style="position:absolute;left:1230px;top:159.5px;" width="11" height="9" viewBox="0 0 11 9"><path d="M0.5 2.5h2v-2h4v2h4v6h-10z" fill="#e8e8e8"/><path d="M0.5 4.5h6v4" fill="none" stroke="#3a3a3a" stroke-width="0.7"/></svg>
<div style="left:1245px;top:157.5px;width:1px;height:14px;background:#2e2e2e;"></div>
<svg style="position:absolute;left:1248.5px;top:159.5px;" width="11" height="11" viewBox="0 0 11 11"><path d="M0 1h9M0 4h9M0 7h6" stroke="#e8e8e8" stroke-width="1.3"/><path d="M7 7.5l2 2.5 2-2.5z" fill="#e8e8e8"/></svg>
<svg style="position:absolute;left:1265px;top:158.5px;" width="11" height="12" viewBox="0 0 11 12"><rect x="0.5" y="5.5" width="8" height="6" fill="#e8e8e8"/><path d="M6 5.5V3a2.4 2.4 0 0 1 4.8 0v1.5" fill="none" stroke="#e8e8e8" stroke-width="1.4"/><rect x="3.8" y="7.5" width="1.4" height="2.5" fill="#3a3a3a"/></svg>
<div style="left:1141px;top:157.5px;width:1px;height:14px;background:#2e2e2e;"></div>
<div style="left:1051px;top:171.5px;width:229px;height:68.5px;background:#474747;"></div>
<div style="left:1055.5px;top:177px;width:59.5px;height:18.5px;background:#ffffff;"></div>
<span style="left:1054.50px;top:181.85px;width:59.5px;text-align:center;font-size:8.8px;line-height:8.8px;color:#111;letter-spacing:-0.2px;">color_0</span>
<div style="left:1105.5px;top:185.5px;width:9.5px;height:10px;background:#ffffff;border:1px solid #444;border-width:1px 0 0 1px;"></div>
<span style="left:1105.50px;top:186.80px;width:10px;text-align:center;font-size:8.5px;line-height:8.5px;color:#111;letter-spacing:0px;">0</span>
<div style="left:1057.0px;top:190.5px;width:4.2px;height:5px;background:#000;"></div>
<div style="left:1065.2px;top:190.5px;width:4.2px;height:5px;background:#000;"></div>
<div style="left:1073.4px;top:190.5px;width:4.2px;height:5px;background:#000;"></div>
<div style="left:1081.6px;top:190.5px;width:4.2px;height:5px;background:#000;"></div>
<div style="left:1089.8px;top:190.5px;width:4.2px;height:5px;background:#000;"></div>
<div style="left:1098.0px;top:190.5px;width:4.2px;height:5px;background:#000;"></div>
<div style="left:1118.6px;top:172px;width:64px;height:27.5px;background:#ffffff;border-radius:3px;"></div>
<div style="left:1121px;top:177px;width:59.5px;height:18.5px;background:#ffffff;"></div>
<div style="left:1122.5px;top:178.5px;width:56.5px;height:15.5px;background:#555555;border:1px solid #222;"></div>
<span style="left:1120.00px;top:181.85px;width:60px;text-align:center;font-size:8.8px;line-height:8.8px;color:#f0f0f0;letter-spacing:-0.2px;">Traço</span>
<div style="left:1170.5px;top:185.5px;width:9.5px;height:10px;background:#ffffff;border:1px solid #444;border-width:1px 0 0 1px;"></div>
<span style="left:1170.50px;top:186.80px;width:10px;text-align:center;font-size:8.5px;line-height:8.5px;color:#111;letter-spacing:0px;">1</span>
<div style="left:1186.7px;top:177px;width:59px;height:18.5px;background:#ffb9b9;"></div>
<span style="left:1185.70px;top:181.85px;width:59px;text-align:center;font-size:8.8px;line-height:8.8px;color:#111;letter-spacing:-0.2px;">Pele</span>
<div style="left:1236.2px;top:185.5px;width:9.5px;height:10px;background:#ffffff;border:1px solid #444;border-width:1px 0 0 1px;"></div>
<span style="left:1236.20px;top:186.80px;width:10px;text-align:center;font-size:8.5px;line-height:8.5px;color:#111;letter-spacing:0px;">2</span>
<div style="left:1055.5px;top:202px;width:59.5px;height:18.5px;background:#0012c8;"></div>
<span style="left:1054.50px;top:206.85px;width:59.5px;text-align:center;font-size:8.8px;line-height:8.8px;color:#ffffff;letter-spacing:-0.2px;">Roupa</span>
<div style="left:1105.5px;top:210.5px;width:9.5px;height:10px;background:#ffffff;border:1px solid #444;border-width:1px 0 0 1px;"></div>
<span style="left:1105.50px;top:211.80px;width:10px;text-align:center;font-size:8.5px;line-height:8.5px;color:#111;letter-spacing:0px;">3</span>
<div style="left:1121px;top:202px;width:59.5px;height:18.5px;background:#ffffff;"></div>
<span style="left:1120.00px;top:206.85px;width:59.5px;text-align:center;font-size:8.8px;line-height:8.8px;color:#111;letter-spacing:-0.2px;">Branco</span>
<div style="left:1171.0px;top:210.5px;width:9.5px;height:10px;background:#ffffff;border:1px solid #444;border-width:1px 0 0 1px;"></div>
<span style="left:1171.00px;top:211.80px;width:10px;text-align:center;font-size:8.5px;line-height:8.5px;color:#111;letter-spacing:0px;">4</span>
<div style="left:1186.7px;top:202px;width:59px;height:18.5px;background:#ffffff;"></div>
<span style="left:1185.70px;top:206.85px;width:59px;text-align:center;font-size:8.8px;line-height:8.8px;color:#111;letter-spacing:-0.2px;">Sapato</span>
<div style="left:1236.2px;top:210.5px;width:9.5px;height:10px;background:#ffffff;border:1px solid #444;border-width:1px 0 0 1px;"></div>
<span style="left:1236.20px;top:211.80px;width:10px;text-align:center;font-size:8.5px;line-height:8.5px;color:#111;letter-spacing:0px;">5</span>
<svg style="position:absolute;left:1272.5px;top:173.5px;" width="6" height="4" viewBox="0 0 6 4"><path d="M0.5 3.5L3 0.5 5.5 3.5z" fill="#c8c8c8"/></svg>
<div style="left:1272.5px;top:180px;width:5px;height:51px;background:#5e5e5e;border-radius:2.5px;"></div>
<svg style="position:absolute;left:1272.5px;top:233px;" width="6" height="4" viewBox="0 0 6 4"><path d="M0.5 0.5L3 3.5 5.5 0.5z" fill="#c8c8c8"/></svg>
<div style="left:818.5px;top:242px;width:461.5px;height:134px;background:#474747;"></div>
<div style="left:818.5px;top:242px;width:461.5px;height:14.5px;background:#3e3e3e;"></div>
<span style="left:825.70px;top:245.85px;font-size:8.8px;line-height:8.8px;color:#dedede;letter-spacing:-0.5px;">Level Palette: JG *</span>
<div style="left:1243.9px;top:244px;width:12px;height:11px;background:#e8d22a;"></div>
<svg style="position:absolute;left:1245px;top:245px;" width="10" height="9" viewBox="0 0 10 9"><path d="M3 2.2A3.4 3.4 0 1 0 7 2.2" fill="none" stroke="#222" stroke-width="1.1"/><path d="M5 0.5v4" stroke="#222" stroke-width="1.1"/></svg>
<div style="left:818.5px;top:256.5px;width:461.5px;height:14.5px;background:#3a3a3a;"></div>
<div style="left:837px;top:256.5px;width:62px;height:14.5px;background:#474747;"></div>
<svg style="position:absolute;left:823.5px;top:260.5px;" width="8" height="7" viewBox="0 0 8 7"><path d="M0.7 0v7M2.6 0v7M4.5 0v7M6.4 0v7" stroke="#d8d8d8" stroke-width="0.9"/></svg>
<span style="left:836.50px;top:259.85px;width:60px;text-align:center;font-size:8.8px;line-height:8.8px;color:#e6e6e6;letter-spacing:-0.2px;">colors</span>
<div style="left:1112.8px;top:256.5px;width:167.2px;height:14.5px;background:#474747;"></div>
<svg style="position:absolute;left:1112px;top:258.5px;" width="12" height="10" viewBox="0 0 12 10"><rect x="0.5" y="3" width="1.1" height="6" fill="#e0e0e0"/><rect x="2.6" y="3" width="1.1" height="6" fill="#e0e0e0"/><rect x="4.7" y="3" width="1.1" height="6" fill="#e0e0e0"/><rect x="6.8" y="3" width="1.1" height="6" fill="#e0e0e0"/><path d="M8.5 1.5h2.5v2.5" fill="none" stroke="#e0e0e0" stroke-width="0.8"/></svg>
<div style="left:1132.8px;top:257px;width:1px;height:14px;background:#2e2e2e;"></div>
<svg style="position:absolute;left:1135.5px;top:258.5px;" width="11" height="11" viewBox="0 0 11 11"><path d="M0.5 0.5h8v4M8.5 8v2.5h-8z" fill="none" stroke="#e0e0e0" stroke-width="1.2"/><path d="M3 8l6-6 1.5 1.5-6 6z" fill="#e0e0e0"/><path d="M2 3h3M2 5h2" stroke="#e0e0e0" stroke-width="0.9"/></svg>
<svg style="position:absolute;left:1152px;top:258.8px;" width="10" height="10" viewBox="0 0 10 10"><path d="M0.5 0.5h7.5l1.5 1.5v8h-9z" fill="#e8e8e8"/><rect x="2" y="0.5" width="5" height="3" fill="#3a3a3a"/><rect x="2" y="6" width="6" height="3.5" fill="#3a3a3a"/></svg>
<svg style="position:absolute;left:1169.5px;top:259.3px;" width="8" height="9" viewBox="0 0 8 9"><path d="M7 0.5v8L1 4.5z" fill="#5d5d5d"/></svg>
<div style="left:1182.5px;top:257.8px;width:10px;height:12.5px;background:#7a7a7a;"></div>
<svg style="position:absolute;left:1183.5px;top:258.8px;" width="8" height="11" viewBox="0 0 8 11"><circle cx="4" cy="3" r="2.2" fill="none" stroke="#f0f0f0" stroke-width="1.3"/><path d="M4 5v5M4 8h2" stroke="#f0f0f0" stroke-width="1.3"/></svg>
<svg style="position:absolute;left:1197.5px;top:259.3px;" width="8" height="9" viewBox="0 0 8 9"><path d="M1 0.5v8L7 4.5z" fill="#5d5d5d"/></svg>
<div style="left:1209.4px;top:256.8px;width:1px;height:14px;background:#2e2e2e;"></div>
<svg style="position:absolute;left:1212.5px;top:259.8px;" width="11" height="8" viewBox="0 0 11 8"><path d="M0.5 2.5h2v-2h8v7h-10z" fill="#e8e8e8"/><path d="M0.5 2.5h6v5" fill="none" stroke="#3a3a3a" stroke-width="0.7"/></svg>
<svg style="position:absolute;left:1230px;top:258.8px;" width="11" height="9" viewBox="0 0 11 9"><path d="M0.5 2.5h2v-2h4v2h4v6h-10z" fill="#e8e8e8"/><path d="M0.5 4.5h6v4" fill="none" stroke="#3a3a3a" stroke-width="0.7"/></svg>
<div style="left:1245px;top:256.8px;width:1px;height:14px;background:#2e2e2e;"></div>
<svg style="position:absolute;left:1248.5px;top:258.8px;" width="11" height="11" viewBox="0 0 11 11"><path d="M0 1h9M0 4h9M0 7h6" stroke="#e8e8e8" stroke-width="1.3"/><path d="M7 7.5l2 2.5 2-2.5z" fill="#e8e8e8"/></svg>
<svg style="position:absolute;left:1265px;top:257.8px;" width="11" height="12" viewBox="0 0 11 12"><rect x="0.5" y="5.5" width="8" height="6" fill="#e8e8e8"/><path d="M6 5.5V3a2.4 2.4 0 0 1 4.8 0v1.5" fill="none" stroke="#e8e8e8" stroke-width="1.4"/><rect x="3.8" y="7.5" width="1.4" height="2.5" fill="#3a3a3a"/></svg>
<div style="left:1148.5px;top:257px;width:1px;height:14px;background:#2e2e2e;"></div>
<div style="left:1165.5px;top:257px;width:1px;height:14px;background:#2e2e2e;"></div>
<div style="left:818.5px;top:272.9px;width:451px;height:14.67px;background:#474747;"></div>
<div style="left:820.5px;top:272.9px;width:15px;height:14.17px;background:#ffffff;"></div>
<div style="left:837.2px;top:272.9px;width:0.8px;height:13.67px;background:#b8b8b8;"></div>
<div style="left:838px;top:286.57px;width:431.5px;height:1px;background:#a0a0a0;"></div>
<span style="left:839.00px;top:276.25px;font-size:8.8px;line-height:8.8px;color:#e8e8e8;letter-spacing:-0.35px;">color_0</span>
<div style="left:818.5px;top:287.57px;width:451px;height:14.67px;background:#474747;"></div>
<div style="left:820.5px;top:287.57px;width:15px;height:14.17px;background:#555555;"></div>
<div style="left:837.2px;top:287.57px;width:0.8px;height:13.67px;background:#b8b8b8;"></div>
<div style="left:838px;top:301.24px;width:431.5px;height:1px;background:#a0a0a0;"></div>
<span style="left:839.00px;top:290.92px;font-size:8.8px;line-height:8.8px;color:#e8e8e8;letter-spacing:-0.35px;">Traço</span>
<div style="left:818.5px;top:302.23999999999995px;width:451px;height:14.67px;background:#474747;"></div>
<div style="left:820.5px;top:302.23999999999995px;width:15px;height:14.17px;background:#ffb9b9;"></div>
<div style="left:837.2px;top:302.23999999999995px;width:0.8px;height:13.67px;background:#b8b8b8;"></div>
<div style="left:838px;top:315.90999999999997px;width:431.5px;height:1px;background:#a0a0a0;"></div>
<span style="left:839.00px;top:305.59px;font-size:8.8px;line-height:8.8px;color:#e8e8e8;letter-spacing:-0.35px;">Pele</span>
<div style="left:818.5px;top:316.90999999999997px;width:451px;height:14.67px;background:#474747;"></div>
<div style="left:820.5px;top:316.90999999999997px;width:15px;height:14.17px;background:#0012c8;"></div>
<div style="left:837.2px;top:316.90999999999997px;width:0.8px;height:13.67px;background:#b8b8b8;"></div>
<div style="left:838px;top:330.58px;width:431.5px;height:1px;background:#a0a0a0;"></div>
<span style="left:839.00px;top:320.26px;font-size:8.8px;line-height:8.8px;color:#e8e8e8;letter-spacing:-0.35px;">Roupa</span>
<div style="left:818.5px;top:331.58px;width:451px;height:14.67px;background:#474747;"></div>
<div style="left:820.5px;top:331.58px;width:15px;height:14.17px;background:#ffffff;"></div>
<div style="left:837.2px;top:331.58px;width:0.8px;height:13.67px;background:#b8b8b8;"></div>
<div style="left:838px;top:345.25px;width:431.5px;height:1px;background:#a0a0a0;"></div>
<span style="left:839.00px;top:334.93px;font-size:8.8px;line-height:8.8px;color:#e8e8e8;letter-spacing:-0.35px;">Branco</span>
<div style="left:818.5px;top:346.25px;width:451px;height:14.67px;background:#474747;"></div>
<div style="left:820.5px;top:346.25px;width:15px;height:14.17px;background:#ffffff;"></div>
<div style="left:837.2px;top:346.25px;width:0.8px;height:13.67px;background:#b8b8b8;"></div>
<div style="left:838px;top:359.92px;width:431.5px;height:1px;background:#a0a0a0;"></div>
<span style="left:839.00px;top:349.60px;font-size:8.8px;line-height:8.8px;color:#e8e8e8;letter-spacing:-0.35px;">Sapato</span>
<div style="left:818.5px;top:315.90999999999997px;width:451px;height:1.8px;background:#e8f0f4;"></div>
<div style="left:818.5px;top:330.38px;width:451px;height:2px;background:#ffffff;"></div>
<div style="left:818.5px;top:316.90999999999997px;width:2px;height:14.67px;background:#ffffff;"></div>
<div style="left:819px;top:361.3px;width:451px;height:14.7px;background:#474747;"></div>
<svg style="position:absolute;left:852px;top:357px;" width="9" height="13" viewBox="0 0 9 13"><path d="M0.8 0.8v10.5l2.6-2.4 2 3.8 1.6-.8-2-3.7h3.5z" fill="#fff" stroke="#111" stroke-width="0.9"/></svg>
<div style="left:1269.5px;top:271.5px;width:10.5px;height:104.5px;background:#474747;"></div>
<svg style="position:absolute;left:1272px;top:274.5px;" width="6" height="4" viewBox="0 0 6 4"><path d="M0.5 3.5L3 0.5 5.5 3.5z" fill="#c8c8c8"/></svg>
<div style="left:1271.5px;top:281px;width:6px;height:85px;background:#5e5e5e;border-radius:3px;"></div>
<svg style="position:absolute;left:1272px;top:368.5px;" width="6" height="4" viewBox="0 0 6 4"><path d="M0.5 0.5L3 3.5 5.5 0.5z" fill="#c8c8c8"/></svg>
<div style="left:818.5px;top:378.5px;width:461.5px;height:314.2px;background:#474747;"></div>
<div style="left:818.5px;top:378.5px;width:461.5px;height:13.7px;background:#3e3e3e;"></div>
<span style="left:825.70px;top:381.55px;font-size:8.8px;line-height:8.8px;color:#a8a8a8;letter-spacing:-0.5px;">[LEVEL]&nbsp; Palette : JG | #3 : Roupa</span>
<div style="left:818.5px;top:392.2px;width:461.5px;height:14.8px;background:#3a3a3a;"></div>
<div style="left:820px;top:392.2px;width:23.899999999999977px;height:15px;background:#4a4a4a;"></div>
<span style="left:801.95px;top:395.85px;width:60px;text-align:center;font-size:8.8px;line-height:8.8px;color:#ffffff;letter-spacing:-0.35px;">Color</span>
<div style="left:843.9px;top:393px;width:31.300000000000022px;height:14px;background:#404040;"></div>
<span style="left:829.95px;top:395.85px;width:60px;text-align:center;font-size:8.8px;line-height:8.8px;color:#bfbfbf;letter-spacing:-0.35px;">Texture</span>
<div style="left:876px;top:393px;width:28.2px;height:14px;background:#404040;"></div>
<span style="left:860.50px;top:395.85px;width:60px;text-align:center;font-size:8.8px;line-height:8.8px;color:#bfbfbf;letter-spacing:-0.35px;">Vector</span>
<div style="left:905px;top:393px;width:26.999999999999954px;height:14px;background:#404040;"></div>
<span style="left:888.90px;top:395.85px;width:60px;text-align:center;font-size:8.8px;line-height:8.8px;color:#bfbfbf;letter-spacing:-0.35px;">Raster</span>
<div style="left:932.8px;top:393px;width:32.90000000000005px;height:14px;background:#404040;"></div>
<span style="left:919.65px;top:395.85px;width:60px;text-align:center;font-size:8.8px;line-height:8.8px;color:#bfbfbf;letter-spacing:-0.35px;">Settings</span>
<div style="left:820px;top:407px;width:458px;height:111px;background:#4a4a4a;"></div>
<svg style="position:absolute;left:972px;top:407px;" width="156" height="110" viewBox="0 0 156 110"><defs><linearGradient id="cg1" gradientUnits="userSpaceOnUse" x1="60.40" y1="55.40" x2="15.43" y2="29.31"><stop offset="0" stop-color="#ff0000"/><stop offset="1" stop-color="#000"/></linearGradient><linearGradient id="cg2" gradientUnits="userSpaceOnUse" x1="60.40" y1="55.40" x2="60.40" y2="3.00"><stop offset="0" stop-color="#0000ff"/><stop offset="1" stop-color="#000"/></linearGradient><clipPath id="cc3"><polygon points="60.70,55.92 91.32,2.70 30.51,2.48 -0.22,55.70"/></clipPath><linearGradient id="cg4" gradientUnits="userSpaceOnUse" x1="60.40" y1="55.40" x2="105.72" y2="81.69"><stop offset="0" stop-color="#00ff00"/><stop offset="1" stop-color="#000"/></linearGradient><linearGradient id="cg5" gradientUnits="userSpaceOnUse" x1="60.40" y1="55.40" x2="105.89" y2="28.81"><stop offset="0" stop-color="#0000ff"/><stop offset="1" stop-color="#000"/></linearGradient><clipPath id="cc6"><polygon points="59.80,55.40 90.80,2.40 120.60,55.40 90.80,108.00"/></clipPath><linearGradient id="cg7" gradientUnits="userSpaceOnUse" x1="60.40" y1="55.40" x2="15.61" y2="81.59"><stop offset="0" stop-color="#ff0000"/><stop offset="1" stop-color="#000"/></linearGradient><linearGradient id="cg8" gradientUnits="userSpaceOnUse" x1="60.40" y1="55.40" x2="60.40" y2="107.40"><stop offset="0" stop-color="#00ff00"/><stop offset="1" stop-color="#000"/></linearGradient><clipPath id="cc9"><polygon points="60.70,54.88 91.32,107.70 30.50,107.92 -0.22,55.10"/></clipPath><linearGradient id="cg10" gradientUnits="userSpaceOnUse" x1="154.00" y1="3.00" x2="109.14" y2="29.06"><stop offset="0" stop-color="#ffffff"/><stop offset="1" stop-color="#000"/></linearGradient><linearGradient id="cg11" gradientUnits="userSpaceOnUse" x1="0" y1="3" x2="0" y2="106.29999999999995"><stop offset="0" stop-color="#0000ff"/><stop offset="1" stop-color="#000"/></linearGradient><clipPath id="ctri"><polygon points="94.00,3.00 154.00,3.00 154.00,106.30"/></clipPath></defs><g clip-path="url(#cc3)"><g style="isolation:isolate"><rect x="0" y="0" width="156" height="110" fill="#00ff00"/><rect x="0" y="0" width="156" height="110" fill="url(#cg1)" style="mix-blend-mode:screen"/><rect x="0" y="0" width="156" height="110" fill="url(#cg2)" style="mix-blend-mode:screen"/></g></g><g clip-path="url(#cc6)"><g style="isolation:isolate"><rect x="0" y="0" width="156" height="110" fill="#ff0000"/><rect x="0" y="0" width="156" height="110" fill="url(#cg4)" style="mix-blend-mode:screen"/><rect x="0" y="0" width="156" height="110" fill="url(#cg5)" style="mix-blend-mode:screen"/></g></g><g clip-path="url(#cc9)"><g style="isolation:isolate"><rect x="0" y="0" width="156" height="110" fill="#0000ff"/><rect x="0" y="0" width="156" height="110" fill="url(#cg7)" style="mix-blend-mode:screen"/><rect x="0" y="0" width="156" height="110" fill="url(#cg8)" style="mix-blend-mode:screen"/></g></g><polygon points="30.80,3.00 90.80,3.00 120.00,55.40 90.80,107.40 30.80,107.40 0.30,55.40" fill="#000" opacity="0.19"/><g clip-path="url(#ctri)"><g style="isolation:isolate"><rect x="0" y="0" width="156" height="110" fill="#000"/><rect x="0" y="0" width="156" height="110" fill="url(#cg10)" style="mix-blend-mode:screen"/><rect x="0" y="0" width="156" height="110" fill="url(#cg11)" style="mix-blend-mode:screen"/></g></g><circle cx="107.5" cy="26" r="1.8" fill="none" stroke="#222" stroke-width="0.8"/><circle cx="26" cy="101.5" r="1.8" fill="none" stroke="#222" stroke-width="0.8"/></svg>
<div style="left:818.5px;top:517.8px;width:461.5px;height:2.2px;background:#303030;"></div>
<div style="left:818.5px;top:520px;width:461.5px;height:135px;background:#474747;"></div>
<span style="left:822.00px;top:526.93px;font-size:9px;line-height:9px;color:#dedede;letter-spacing:0px;">H</span>
<div style="left:831.25px;top:525.05px;width:30.5px;height:12px;background:#363636;"></div>
<span style="left:834.00px;top:527.10px;font-size:8.8px;line-height:8.8px;color:#e0e0e0;letter-spacing:-0.3px;">234</span>
<svg style="position:absolute;left:868.5px;top:528.25px;" width="5" height="6" viewBox="0 0 5 6"><path d="M4.5 0.5v5L0.5 3z" fill="#b0b0b0"/></svg>
<div style="left:879.25px;top:523.75px;width:383px;height:11.5px;background:#000;background:linear-gradient(to right,#d80000 0.0%,#d86c00 8.3%,#d8d800 16.7%,#6cd800 25.0%,#00d800 33.3%,#00d86c 41.7%,#00d8d8 50.0%,#006cd8 58.3%,#0000d8 66.7%,#6c00d8 75.0%,#d800d8 83.3%,#d8006c 91.7%,#d80000 100.0%);"></div>
<div style="left:879.25px;top:535.25px;width:383px;height:1.2px;background:#f0d8d8;"></div>
<svg style="position:absolute;left:1267.5px;top:528.25px;" width="5" height="6" viewBox="0 0 5 6"><path d="M0.5 0.5v5L4.5 3z" fill="#b0b0b0"/></svg>
<svg style="position:absolute;left:1125.5px;top:523.75px;" width="6" height="15" viewBox="0 0 6 15"><path d="M2.5 0v12.8H0.5" fill="none" stroke="#e8e8e8" stroke-width="1.1"/><path d="M2.5 12.8h2" stroke="#333" stroke-width="1"/></svg>
<span style="left:822.00px;top:543.93px;font-size:9px;line-height:9px;color:#dedede;letter-spacing:0px;">S</span>
<div style="left:831.25px;top:542.05px;width:30.5px;height:12px;background:#363636;"></div>
<span style="left:834.00px;top:544.10px;font-size:8.8px;line-height:8.8px;color:#e0e0e0;letter-spacing:-0.3px;">100</span>
<svg style="position:absolute;left:868.5px;top:545.25px;" width="5" height="6" viewBox="0 0 5 6"><path d="M4.5 0.5v5L0.5 3z" fill="#b0b0b0"/></svg>
<div style="left:879.25px;top:540.75px;width:383px;height:11.5px;background:#000;background:linear-gradient(to right,#cfcfcf,#8088cc 50%,#0014c9);"></div>
<div style="left:879.25px;top:552.25px;width:383px;height:1.2px;background:#b8b8b8;"></div>
<svg style="position:absolute;left:1267.5px;top:545.25px;" width="5" height="6" viewBox="0 0 5 6"><path d="M0.5 0.5v5L4.5 3z" fill="#b0b0b0"/></svg>
<svg style="position:absolute;left:1256.5px;top:540.75px;" width="6" height="15" viewBox="0 0 6 15"><path d="M2.5 0v12.8H0.5" fill="none" stroke="#e8e8e8" stroke-width="1.1"/><path d="M2.5 12.8h2" stroke="#333" stroke-width="1"/></svg>
<span style="left:822.00px;top:561.43px;font-size:9px;line-height:9px;color:#dedede;letter-spacing:0px;">V</span>
<div style="left:831.25px;top:559.55px;width:30.5px;height:12px;background:#363636;"></div>
<span style="left:834.00px;top:561.60px;font-size:8.8px;line-height:8.8px;color:#e0e0e0;letter-spacing:-0.3px;">78</span>
<svg style="position:absolute;left:868.5px;top:562.75px;" width="5" height="6" viewBox="0 0 5 6"><path d="M4.5 0.5v5L0.5 3z" fill="#b0b0b0"/></svg>
<div style="left:879.25px;top:558.25px;width:383px;height:11.5px;background:#000;background:linear-gradient(to right,#000000,#000a50 30%,#0012c0 70%,#0018ff);"></div>
<div style="left:879.25px;top:569.75px;width:383px;height:1.2px;background:#f0f0f0;"></div>
<svg style="position:absolute;left:1267.5px;top:562.75px;" width="5" height="6" viewBox="0 0 5 6"><path d="M0.5 0.5v5L4.5 3z" fill="#b0b0b0"/></svg>
<svg style="position:absolute;left:1173.0px;top:558.25px;" width="6" height="15" viewBox="0 0 6 15"><path d="M2.5 0v12.8H0.5" fill="none" stroke="#e8e8e8" stroke-width="1.1"/><path d="M2.5 12.8h2" stroke="#333" stroke-width="1"/></svg>
<span style="left:822.00px;top:581.93px;font-size:9px;line-height:9px;color:#dedede;letter-spacing:0px;">A</span>
<div style="left:831.25px;top:580.05px;width:30.5px;height:12px;background:#363636;"></div>
<span style="left:834.00px;top:582.10px;font-size:8.8px;line-height:8.8px;color:#e0e0e0;letter-spacing:-0.3px;">255</span>
<svg style="position:absolute;left:868.5px;top:583.25px;" width="5" height="6" viewBox="0 0 5 6"><path d="M4.5 0.5v5L0.5 3z" fill="#b0b0b0"/></svg>
<div style="left:879.25px;top:578.75px;width:383px;height:11.5px;background:#000;background:linear-gradient(to right,#000000,#808080 50%,#ffffff);"></div>
<div style="left:879.25px;top:590.25px;width:383px;height:1.2px;background:#b8b8b8;"></div>
<svg style="position:absolute;left:1267.5px;top:583.25px;" width="5" height="6" viewBox="0 0 5 6"><path d="M0.5 0.5v5L4.5 3z" fill="#b0b0b0"/></svg>
<svg style="position:absolute;left:1257.0px;top:578.75px;" width="6" height="15" viewBox="0 0 6 15"><path d="M2.5 0v12.8H0.5" fill="none" stroke="#e8e8e8" stroke-width="1.1"/><path d="M2.5 12.8h2" stroke="#333" stroke-width="1"/></svg>
<span style="left:822.00px;top:602.68px;font-size:9px;line-height:9px;color:#dedede;letter-spacing:0px;">R</span>
<div style="left:831.25px;top:600.8px;width:30.5px;height:12px;background:#363636;"></div>
<span style="left:834.00px;top:602.85px;font-size:8.8px;line-height:8.8px;color:#e0e0e0;letter-spacing:-0.3px;">0</span>
<svg style="position:absolute;left:868.5px;top:604px;" width="5" height="6" viewBox="0 0 5 6"><path d="M4.5 0.5v5L0.5 3z" fill="#b0b0b0"/></svg>
<div style="left:879.25px;top:599.5px;width:383px;height:11.5px;background:#000;background:linear-gradient(to right,#000000,#800000 40%,#ff0000);"></div>
<div style="left:879.25px;top:611px;width:383px;height:1.2px;background:#f0b0b0;"></div>
<svg style="position:absolute;left:1267.5px;top:604px;" width="5" height="6" viewBox="0 0 5 6"><path d="M0.5 0.5v5L4.5 3z" fill="#b0b0b0"/></svg>
<svg style="position:absolute;left:879.25px;top:599.5px;" width="6" height="15" viewBox="0 0 6 15"><path d="M2.5 0v12.8H0.5" fill="none" stroke="#e8e8e8" stroke-width="1.1"/><path d="M2.5 12.8h2" stroke="#333" stroke-width="1"/></svg>
<span style="left:822.00px;top:620.18px;font-size:9px;line-height:9px;color:#dedede;letter-spacing:0px;">G</span>
<div style="left:831.25px;top:618.3px;width:30.5px;height:12px;background:#363636;"></div>
<span style="left:834.00px;top:620.35px;font-size:8.8px;line-height:8.8px;color:#e0e0e0;letter-spacing:-0.3px;">20</span>
<svg style="position:absolute;left:868.5px;top:621.5px;" width="5" height="6" viewBox="0 0 5 6"><path d="M4.5 0.5v5L0.5 3z" fill="#b0b0b0"/></svg>
<div style="left:879.25px;top:617.0px;width:383px;height:11.5px;background:#000;background:linear-gradient(to right,#001400,#008a14 50%,#00ff14);"></div>
<div style="left:879.25px;top:628.5px;width:383px;height:1.2px;background:#a0d0a0;"></div>
<svg style="position:absolute;left:1267.5px;top:621.5px;" width="5" height="6" viewBox="0 0 5 6"><path d="M0.5 0.5v5L4.5 3z" fill="#b0b0b0"/></svg>
<svg style="position:absolute;left:908.25px;top:617.0px;" width="6" height="15" viewBox="0 0 6 15"><path d="M2.5 0v12.8H0.5" fill="none" stroke="#e8e8e8" stroke-width="1.1"/><path d="M2.5 12.8h2" stroke="#333" stroke-width="1"/></svg>
<span style="left:822.00px;top:637.68px;font-size:9px;line-height:9px;color:#dedede;letter-spacing:0px;">B</span>
<div style="left:831.25px;top:635.8px;width:30.5px;height:12px;background:#363636;"></div>
<span style="left:834.00px;top:637.85px;font-size:8.8px;line-height:8.8px;color:#e0e0e0;letter-spacing:-0.3px;">201</span>
<svg style="position:absolute;left:868.5px;top:639px;" width="5" height="6" viewBox="0 0 5 6"><path d="M4.5 0.5v5L0.5 3z" fill="#b0b0b0"/></svg>
<div style="left:879.25px;top:634.5px;width:383px;height:11.5px;background:#000;background:linear-gradient(to right,#000000,#000a80 40%,#0014ff);"></div>
<div style="left:879.25px;top:646px;width:383px;height:1.2px;background:#f0f0f0;"></div>
<svg style="position:absolute;left:1267.5px;top:639px;" width="5" height="6" viewBox="0 0 5 6"><path d="M0.5 0.5v5L4.5 3z" fill="#b0b0b0"/></svg>
<svg style="position:absolute;left:1176.75px;top:634.5px;" width="6" height="15" viewBox="0 0 6 15"><path d="M2.5 0v12.8H0.5" fill="none" stroke="#e8e8e8" stroke-width="1.1"/><path d="M2.5 12.8h2" stroke="#333" stroke-width="1"/></svg>
<div style="left:818.5px;top:576.5px;width:461.5px;height:1px;background:#333;"></div>
<div style="left:818.5px;top:596.5px;width:461.5px;height:1px;background:#333;"></div>
<div style="left:818.5px;top:652px;width:461.5px;height:1px;background:#333;"></div>
<div style="left:821px;top:657px;width:25px;height:14.5px;background:#3a3a3a;"></div>
<span style="left:818.50px;top:660.05px;width:30px;text-align:center;font-size:8.8px;line-height:8.8px;color:#e6e6e6;letter-spacing:-0.3px;">Auto</span>
<div style="left:848.75px;top:657px;width:27.5px;height:14.5px;background:#505050;"></div>
<span style="left:847.50px;top:660.05px;width:30px;text-align:center;font-size:8.8px;line-height:8.8px;color:#707070;letter-spacing:-0.3px;">Apply</span>
<div style="left:879px;top:655px;width:400px;height:18px;background:#0012c8;"></div>
<div style="left:818.5px;top:673px;width:461.5px;height:19.7px;background:#474747;"></div>
<div style="left:1252px;top:681px;width:10px;height:9px;background:#6a6a6a;"></div>
<svg style="position:absolute;left:1253px;top:682px;" width="8" height="7" viewBox="0 0 8 7"><path d="M1 3.5h6" stroke="#e0e0e0" stroke-width="1"/><path d="M0.5 3.5l2-2v4zM7.5 3.5l-2-2v4z" fill="#e0e0e0"/></svg>
<svg style="position:absolute;left:1265px;top:681px;" width="10" height="9" viewBox="0 0 10 9"><path d="M0 1h9M0 3.5h9M0 6h9" stroke="#e0e0e0" stroke-width="1.2"/><path d="M6 7l1.5 2 1.5-2z" fill="#e0e0e0"/></svg>
<div style="left:0px;top:692.7px;width:1280px;height:27.299999999999955px;background:#4d4285;"></div>
<svg style="position:absolute;left:0px;top:692.7px;" width="1280" height="28" viewBox="0 0 1280 28"><path d="M0 0H150L75 2.8L0 4.8z" fill="#6a5a90"/><path d="M432.8 0H1143.75L1140 5.3C1100 10 1050 16 1000 18.3L753 21.8L748 18.7L600 15.3L432.8 7.8z" fill="#6b5890"/><path d="M748 0H753V21.8L748 18.7z" fill="#584a88"/><path d="M0 4.8L75 2.8L432.8 7.8L600 15.3L748 18.7L753 21.8L1000 18.3L1140 5.3L1143.75 0H1280V28H0z" fill="#4f4486"/></svg>
<svg style="position:absolute;left:7.9px;top:697.8px;" width="18" height="17" viewBox="0 0 18 17"><path d="M0 2.2L7.2 1.2V8H0z M8.2 1L17.5 0V8H8.2z M0 9H7.2V15.8L0 14.8z M8.2 9H17.5V17L8.2 15.9z" fill="#ffffff"/></svg>
<svg style="position:absolute;left:44px;top:695.6px;" width="21" height="21" viewBox="0 0 21 21"><circle cx="10.5" cy="10.5" r="9.8" fill="#ff6a1a"/><path d="M10.5 0.7A9.8 9.8 0 0 1 20.3 10.5 9.8 9.8 0 0 1 15 19C18 15 18 9 14 6C15 4 14 2 12 1z" fill="#ffb02a"/><circle cx="10" cy="10" r="5.5" fill="#3b2fbf"/><path d="M4 6C6 3 9 3 11 4C9 5 8 7 9 8C11 9 13 10 12 13C10 15 6 15 4 12z" fill="#ff8a30"/></svg>
<div style="left:76px;top:694.0px;width:35px;height:25.999999999999954px;background:#5f5692;border:1px solid #7f77ac;"></div>
<div style="left:111.5px;top:694.0px;width:3.3px;height:25.999999999999954px;background:#5f5692;border:1px solid #7f77ac;"></div>
<svg style="position:absolute;left:82.8px;top:698px;" width="21.5" height="18" viewBox="0 0 21.5 18"><path d="M0.5 1.5h7l2 2h11v13h-20z" fill="#e8c65a"/><rect x="0.5" y="4" width="20.5" height="12.5" fill="#f9dd7a"/><rect x="2" y="5" width="5" height="2" fill="#2a9b3a"/><rect x="8" y="5" width="3" height="2" fill="#d84a3a"/><path d="M4 10h13v6.5h-2v-4.5h-9v4.5h-2z" fill="#3aa0e0"/></svg>
<div style="left:117.2px;top:694.0px;width:38.5px;height:25.999999999999954px;background:#5f5692;border:1px solid #7f77ac;"></div>
<svg style="position:absolute;left:127px;top:696px;" width="21" height="21" viewBox="0 0 21 21"><circle cx="10.5" cy="10.5" r="10" fill="#db4437"/><path d="M10.5 10.5L1.9 15.5A10 10 0 0 0 15.5 19.2z" fill="#0f9d58"/><path d="M10.5 10.5L20.5 10.5A10 10 0 0 1 15.5 19.2z" fill="#f4b400"/><circle cx="10.5" cy="10.5" r="4.6" fill="#fff"/><circle cx="10.5" cy="10.5" r="3.6" fill="#4285f4"/><rect x="12.5" y="12" width="8" height="9" fill="#6b5a3a"/><circle cx="16.5" cy="14" r="2" fill="#e8c8a0"/></svg>
<svg style="position:absolute;left:167px;top:697px;" width="22" height="18" viewBox="0 0 22 18"><path d="M2 10L9 5L5 3h6l7 5a6 6 0 1 1-10 5L3 13z" fill="#f57e1f"/><circle cx="13" cy="11" r="4" fill="#fff"/><circle cx="13" cy="11" r="2.6" fill="#1e4a9a"/></svg>
<div style="left:200px;top:694.0px;width:39px;height:25.999999999999954px;background:#8a80b8;border:1px solid #c8c0e8;"></div>
<div style="left:208.4px;top:696px;width:22px;height:21px;background:#4a9a32;"></div>
<svg style="position:absolute;left:209px;top:697px;" width="21" height="19" viewBox="0 0 21 19"><circle cx="6.5" cy="9.5" r="5" fill="none" stroke="#f0fff0" stroke-width="1.8"/><path d="M11.5 5h8M15.5 5v10" stroke="#f0fff0" stroke-width="1.8"/><path d="M10 18Q16 17 21 13V19H10z" fill="#2e7a22"/></svg>
<svg style="position:absolute;left:250.5px;top:696.5px;" width="20" height="20" viewBox="0 0 20 20"><circle cx="10" cy="10" r="10" fill="#f28a1e"/><circle cx="10" cy="10" r="5" fill="none" stroke="#fff" stroke-width="1.6"/><path d="M10 2v16M2 10h16M4.3 4.3l11.4 11.4M15.7 4.3L4.3 15.7" stroke="#fff" stroke-width="1.2"/><circle cx="10" cy="10" r="2" fill="#fff"/></svg>
<div style="left:282.7px;top:694.0px;width:38.3px;height:25.999999999999954px;background:#5f5692;border:1px solid #7f77ac;"></div>
<div style="left:291.6px;top:696px;width:21px;height:21px;background:#f6f6f6;border-radius:4px;"></div>
<svg style="position:absolute;left:294.5px;top:698.5px;" width="15" height="16" viewBox="0 0 15 16"><path d="M7.5 1C11 3 14 7 14 10.5A6.5 5.5 0 0 1 1 10.5C1 7 4 3 7.5 1z" fill="#2ab0a8"/><path d="M7.5 1C11 3 14 7 14 10H6C4 8 5 3 7.5 1z" fill="#e84a3a"/><path d="M5 5C7 4 10 5 12 7L7 9z" fill="#f8c03a"/></svg>
<div style="left:324px;top:694.0px;width:39px;height:25.999999999999954px;background:#5f5692;border:1px solid #7f77ac;"></div>
<svg style="position:absolute;left:333px;top:696.5px;" width="20" height="20" viewBox="0 0 20 20"><circle cx="10" cy="10" r="9.6" fill="#262626" stroke="#ddd" stroke-width="0.8"/><circle cx="10" cy="10" r="6.5" fill="none" stroke="#fff" stroke-width="1"/><circle cx="10" cy="6" r="2.2" fill="#fff"/><circle cx="6.4" cy="12.2" r="2.2" fill="#fff"/><circle cx="13.6" cy="12.2" r="2.2" fill="#fff"/></svg>
<div style="left:365px;top:694.0px;width:39.2px;height:25.999999999999954px;background:#5f5692;border:1px solid #7f77ac;"></div>
<svg style="position:absolute;left:374px;top:696.5px;" width="20" height="20" viewBox="0 0 20 20"><circle cx="10" cy="10" r="9.5" fill="#1aa2e8"/><text x="10" y="15" text-anchor="middle" font-family="Liberation Sans" font-weight="bold" font-size="14" fill="#fff">S</text></svg>
<div style="left:960.8px;top:700.8px;width:20.2px;height:12px;background:#e8e8e8;border-radius:1px;"></div>
<svg style="position:absolute;left:961.5px;top:701.5px;" width="19" height="10.5" viewBox="0 0 19 10.5"><rect x="1.5" y="1.5" width="1.5" height="1.6" fill="#555"/><rect x="1.5" y="4.1" width="1.5" height="1.6" fill="#555"/><rect x="1.5" y="6.7" width="1.5" height="1.6" fill="#555"/><rect x="3.9" y="1.5" width="1.5" height="1.6" fill="#555"/><rect x="3.9" y="4.1" width="1.5" height="1.6" fill="#555"/><rect x="3.9" y="6.7" width="1.5" height="1.6" fill="#555"/><rect x="6.3" y="1.5" width="1.5" height="1.6" fill="#555"/><rect x="6.3" y="4.1" width="1.5" height="1.6" fill="#555"/><rect x="6.3" y="6.7" width="1.5" height="1.6" fill="#555"/><rect x="8.7" y="1.5" width="1.5" height="1.6" fill="#555"/><rect x="8.7" y="4.1" width="1.5" height="1.6" fill="#555"/><rect x="8.7" y="6.7" width="1.5" height="1.6" fill="#555"/><rect x="11.1" y="1.5" width="1.5" height="1.6" fill="#555"/><rect x="11.1" y="4.1" width="1.5" height="1.6" fill="#555"/><rect x="11.1" y="6.7" width="1.5" height="1.6" fill="#555"/><rect x="13.5" y="1.5" width="1.5" height="1.6" fill="#555"/><rect x="13.5" y="4.1" width="1.5" height="1.6" fill="#555"/><rect x="13.5" y="6.7" width="1.5" height="1.6" fill="#555"/><rect x="15.899999999999999" y="1.5" width="1.5" height="1.6" fill="#555"/><rect x="15.899999999999999" y="4.1" width="1.5" height="1.6" fill="#555"/><rect x="15.899999999999999" y="6.7" width="1.5" height="1.6" fill="#555"/></svg>
<svg style="position:absolute;left:988px;top:699.5px;" width="14" height="14" viewBox="0 0 14 14"><g transform="translate(1.2,1.2) scale(0.83)"><path d="M2 10a3 3 0 0 1 1-5.5A4 4 0 0 1 11 4a3 3 0 0 1 1.5 6z" fill="#fff"/><path d="M7 6v4M5.5 7.5L7 6l1.5 1.5" stroke="#4a3a78" stroke-width="1"/></g></svg>
<svg style="position:absolute;left:1004.3px;top:699.5px;" width="14" height="14" viewBox="0 0 14 14"><g transform="translate(1.2,1.2) scale(0.83)"><rect x="1" y="1" width="12" height="12" rx="4" fill="#1aa2e8"/><text x="7" y="11" text-anchor="middle" font-family="Liberation Sans" font-weight="bold" font-size="10" fill="#fff">S</text></g></svg>
<svg style="position:absolute;left:1020.3px;top:699.5px;" width="14" height="14" viewBox="0 0 14 14"><g transform="translate(1.2,1.2) scale(0.83)"><path d="M1 9a3 3 0 0 1 1-5A4 4 0 0 1 10 3a3 3 0 0 1 1 6z" fill="#eee"/><path d="M8 7l4 6H4z" fill="#f5c400"/></g></svg>
<svg style="position:absolute;left:1035.8px;top:699.5px;" width="14" height="14" viewBox="0 0 14 14"><g transform="translate(1.2,1.2) scale(0.83)"><path d="M7 1l2 4 4 1-3 3 1 4-4-2-4 2 1-4-3-3 4-1z" fill="#f07a1a"/><circle cx="7" cy="7" r="2" fill="#fff"/></g></svg>
<svg style="position:absolute;left:1052px;top:699.5px;" width="14" height="14" viewBox="0 0 14 14"><g transform="translate(1.2,1.2) scale(0.83)"><circle cx="7" cy="7" r="6.5" fill="#111"/><path d="M3 9l4-4 4 2" fill="none" stroke="#fff" stroke-width="1"/><circle cx="4" cy="10" r="2" fill="#d02020"/></g></svg>
<svg style="position:absolute;left:1068px;top:699.5px;" width="14" height="14" viewBox="0 0 14 14"><g transform="translate(1.2,1.2) scale(0.83)"><rect x="0.5" y="0.5" width="13" height="13" fill="#f27a4a"/><circle cx="7" cy="7" r="4" fill="none" stroke="#fff" stroke-width="1.2"/><path d="M9 9l3 3" stroke="#fff" stroke-width="1.2"/></g></svg>
<svg style="position:absolute;left:1084px;top:699.5px;" width="14" height="14" viewBox="0 0 14 14"><g transform="translate(1.2,1.2) scale(0.83)"><rect x="1" y="1" width="12" height="12" rx="2" fill="#1a8ae0"/><path d="M3 7h8M7 4v6" stroke="#fff" stroke-width="1.3"/></g></svg>
<svg style="position:absolute;left:1100px;top:699.5px;" width="14" height="14" viewBox="0 0 14 14"><g transform="translate(1.2,1.2) scale(0.83)"><path d="M3.5 2L7 4.5 3.5 7 0 4.5zM10.5 2L14 4.5 10.5 7 7 4.5zM3.5 7.5L7 10 10.5 7.5 14 10 7 13 0 10z" fill="#fff"/></g></svg>
<svg style="position:absolute;left:1115.7px;top:699.5px;" width="14" height="14" viewBox="0 0 14 14"><g transform="translate(1.2,1.2) scale(0.83)"><path d="M1 5h3l4-3.5v11L4 9H1z" fill="#e84a2a"/><path d="M10 4a4 4 0 0 1 0 6" fill="none" stroke="#777" stroke-width="1"/></g></svg>
<svg style="position:absolute;left:1132.4px;top:699.5px;" width="14" height="14" viewBox="0 0 14 14"><g transform="translate(1.2,1.2) scale(0.83)"><rect x="2" y="1" width="7" height="8" fill="#999"/><rect x="3" y="2" width="5" height="3" fill="#ddd"/><circle cx="10" cy="10" r="3.5" fill="#2aa03a"/><path d="M8.3 10l1.3 1.2 2.2-2.4" fill="none" stroke="#fff" stroke-width="0.9"/></g></svg>
<svg style="position:absolute;left:1148px;top:699.5px;" width="14" height="14" viewBox="0 0 14 14"><g transform="translate(1.2,1.2) scale(0.83)"><rect x="1" y="1" width="9" height="11" fill="#eee"/><path d="M1 1l3 0 0 3z" fill="#d02020"/><rect x="7" y="7" width="6.5" height="6.5" fill="#e02a2a"/><path d="M8.3 8.3l4 4M12.3 8.3l-4 4" stroke="#fff" stroke-width="1"/></g></svg>
<svg style="position:absolute;left:1164px;top:699.5px;" width="14" height="14" viewBox="0 0 14 14"><g transform="translate(1.2,1.2) scale(0.83)"><rect x="2" y="1" width="10" height="8" fill="none" stroke="#fff" stroke-width="1.1"/><rect x="1" y="9" width="4" height="4" fill="#fff"/><path d="M7 9v4" stroke="#fff" stroke-width="1"/></g></svg>
<svg style="position:absolute;left:1179.6px;top:699.5px;" width="14" height="14" viewBox="0 0 14 14"><g transform="translate(1.2,1.2) scale(0.83)"><path d="M1 5h3l4-3.5v11L4 9H1z" fill="#fff"/><path d="M10 4.5a3 3 0 0 1 0 5M12 3a5.5 5.5 0 0 1 0 8" fill="none" stroke="#fff" stroke-width="1"/></g></svg>
<span style="left:1189.80px;top:696.68px;width:40px;text-align:center;font-size:9px;line-height:9px;color:#ffffff;letter-spacing:-0.1px;">POR</span>
<span style="left:1189.80px;top:708.18px;width:40px;text-align:center;font-size:9px;line-height:9px;color:#ffffff;letter-spacing:-0.1px;">PTB2</span>
<span style="left:1217.70px;top:696.68px;width:60px;text-align:center;font-size:9px;line-height:9px;color:#ffffff;letter-spacing:-0.1px;">13:45</span>
<span style="left:1217.70px;top:708.18px;width:60px;text-align:center;font-size:9px;line-height:9px;color:#ffffff;letter-spacing:-0.2px;">03/10/2018</span>
</body></html>
